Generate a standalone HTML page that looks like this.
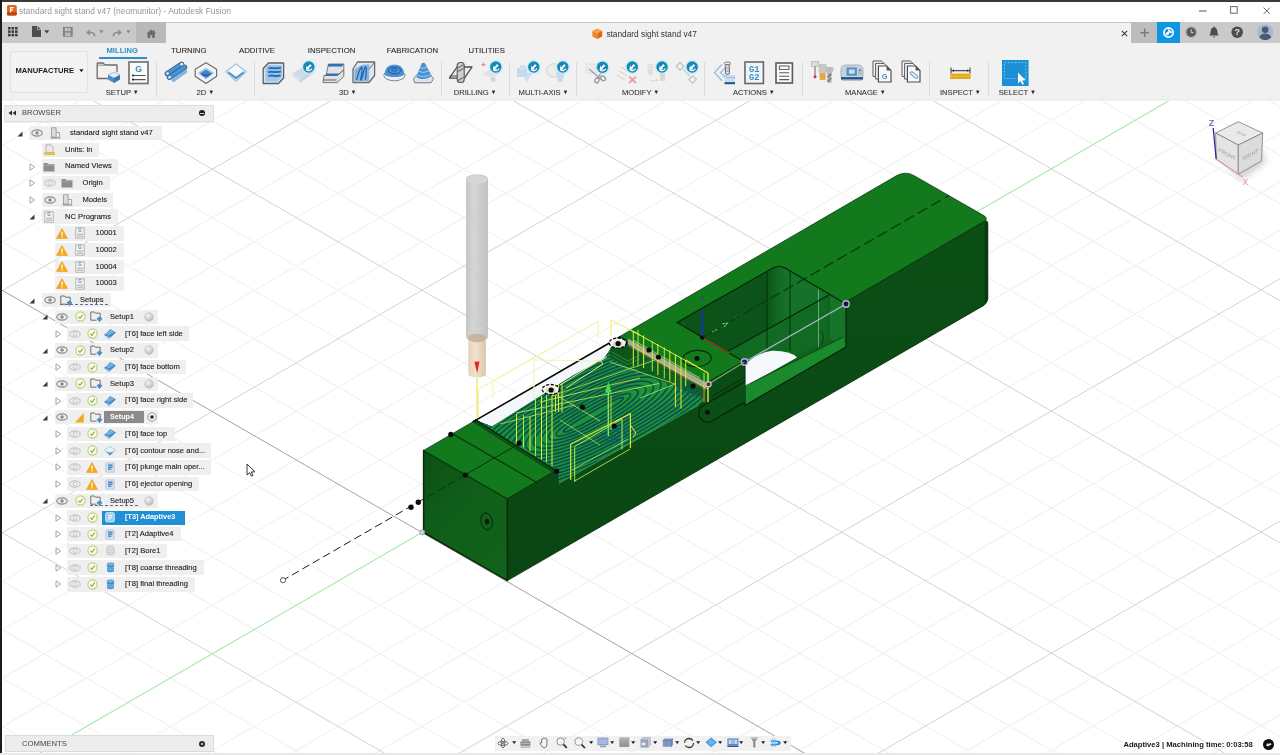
<!DOCTYPE html>
<html><head><meta charset="utf-8"><title>Autodesk Fusion</title>
<style>
*{box-sizing:border-box;margin:0;padding:0}
html,body{width:1280px;height:755px;overflow:hidden;background:#fff;font-family:"Liberation Sans",sans-serif;}
#root{position:relative;width:1280px;height:755px;overflow:hidden;background:#fff}
.abs{position:absolute}
.t{position:absolute;white-space:nowrap;line-height:1;color:#3a3a3a;filter:blur(0.35px)}
.tab{font-size:7.8px;color:#2a2a2a;top:46.5px;-webkit-text-stroke:0.1px #2a2a2a}
.grp{font-size:7.6px;color:#383838;top:88.8px;-webkit-text-stroke:0.1px #383838}
.row{position:absolute;background:#efefef;height:14px;border-radius:1px}
.tr{font-size:7.6px;color:#222;-webkit-text-stroke:0.12px #222}
.ic{filter:blur(0.3px)}
.sep{position:absolute;width:1px;background:#dcdcdc;top:62px;height:34px}
</style></head>
<body><div id="root">
<svg class="abs" style="left:0;top:100px;filter:blur(0.35px)" width="1280" height="655" viewBox="0 100 1280 655">
<path d="M-2892.1 558.7L463.9 -1381.3M-2892.1 510.2L463.9 2446.2M-2850.1 582.9L505.9 -1357.1M-2850.1 486.0L505.9 2422.0M-2808.2 607.1L547.8 -1332.9M-2808.2 461.8L547.8 2397.8M-2766.2 631.3L589.8 -1308.7M-2766.2 437.5L589.8 2373.5M-2682.3 679.7L673.7 -1260.3M-2682.3 389.0L673.7 2325.0M-2640.4 703.9L715.6 -1236.1M-2640.4 364.8L715.6 2300.8M-2598.4 728.1L757.6 -1211.9M-2598.4 340.5L757.6 2276.5M-2556.4 752.3L799.5 -1187.7M-2556.4 316.2L799.5 2252.2M-2472.6 800.7L883.4 -1139.3M-2472.6 267.8L883.4 2203.8M-2430.6 824.9L925.4 -1115.1M-2430.6 243.5L925.4 2179.5M-2388.7 849.1L967.3 -1090.9M-2388.7 219.2L967.3 2155.2M-2346.7 873.3L1009.3 -1066.7M-2346.7 195.0L1009.3 2131.0M-2262.8 921.7L1093.2 -1018.3M-2262.8 146.5L1093.2 2082.5M-2220.8 945.9L1135.2 -994.1M-2220.8 122.2L1135.2 2058.2M-2178.9 970.1L1177.1 -969.9M-2178.9 98.0L1177.1 2034.0M-2136.9 994.3L1219.0 -945.7M-2136.9 73.8L1219.0 2009.8M-2053.1 1042.7L1302.9 -897.3M-2053.1 25.2L1302.9 1961.2M-2011.1 1066.9L1344.9 -873.1M-2011.1 1.0L1344.9 1937.0M-1969.2 1091.1L1386.8 -848.9M-1969.2 -23.2L1386.8 1912.8M-1927.2 1115.3L1428.8 -824.7M-1927.2 -47.5L1428.8 1888.5M-1843.3 1163.7L1512.7 -776.3M-1843.3 -96.0L1512.7 1840.0M-1801.3 1187.9L1554.7 -752.1M-1801.3 -120.2L1554.7 1815.8M-1759.4 1212.1L1596.6 -727.9M-1759.4 -144.5L1596.6 1791.5M-1717.5 1236.3L1638.5 -703.7M-1717.5 -168.8L1638.5 1767.2M-1633.5 1284.7L1722.5 -655.3M-1633.5 -217.2L1722.5 1718.8M-1591.6 1308.9L1764.4 -631.1M-1591.6 -241.5L1764.4 1694.5M-1549.7 1333.1L1806.3 -606.9M-1549.7 -265.8L1806.3 1670.2M-1507.7 1357.3L1848.3 -582.7M-1507.7 -290.0L1848.3 1646.0M-1423.8 1405.7L1932.2 -534.3M-1423.8 -338.5L1932.2 1597.5M-1381.8 1429.9L1974.2 -510.1M-1381.8 -362.8L1974.2 1573.2M-1339.9 1454.1L2016.1 -485.9M-1339.9 -387.0L2016.1 1549.0M-1298.0 1478.3L2058.1 -461.7M-1298.0 -411.2L2058.1 1524.8M-1214.0 1526.7L2141.9 -413.3M-1214.0 -459.8L2141.9 1476.2M-1172.1 1550.9L2183.9 -389.1M-1172.1 -484.0L2183.9 1452.0M-1130.2 1575.1L2225.8 -364.9M-1130.2 -508.2L2225.8 1427.8M-1088.2 1599.3L2267.8 -340.7M-1088.2 -532.5L2267.8 1403.5M-1004.3 1647.7L2351.7 -292.3M-1004.3 -581.0L2351.7 1355.0M-962.3 1671.9L2393.7 -268.1M-962.3 -605.2L2393.7 1330.8M-920.4 1696.1L2435.6 -243.9M-920.4 -629.5L2435.6 1306.5M-878.5 1720.3L2477.6 -219.7M-878.5 -653.8L2477.6 1282.2M-794.5 1768.7L2561.4 -171.3M-794.5 -702.2L2561.4 1233.8M-752.6 1792.9L2603.4 -147.1M-752.6 -726.5L2603.4 1209.5M-710.6 1817.1L2645.3 -122.9M-710.6 -750.8L2645.3 1185.2M-668.7 1841.3L2687.3 -98.7M-668.7 -775.0L2687.3 1161.0M-584.8 1889.7L2771.2 -50.3M-584.8 -823.5L2771.2 1112.5M-542.8 1913.9L2813.2 -26.1M-542.8 -847.8L2813.2 1088.2M-500.9 1938.1L2855.1 -1.9M-500.9 -872.0L2855.1 1064.0M-458.9 1962.3L2897.1 22.3M-458.9 -896.2L2897.1 1039.8M-375.0 2010.7L2980.9 70.7M-375.0 -944.8L2980.9 991.2M-333.1 2034.9L3022.9 94.9M-333.1 -969.0L3022.9 967.0M-291.1 2059.1L3064.8 119.1M-291.2 -993.2L3064.8 942.8M-249.2 2083.3L3106.8 143.3M-249.2 -1017.5L3106.8 918.5M-165.3 2131.7L3190.7 191.7M-165.3 -1066.0L3190.7 870.0M-123.3 2155.9L3232.7 215.9M-123.3 -1090.2L3232.7 845.8M-81.4 2180.1L3274.6 240.1M-81.4 -1114.5L3274.6 821.5M-39.4 2204.3L3316.6 264.3M-39.4 -1138.8L3316.6 797.2M44.5 2252.7L3400.4 312.7M44.5 -1187.2L3400.4 748.8M86.4 2276.9L3442.4 336.9M86.4 -1211.5L3442.4 724.5M128.4 2301.1L3484.4 361.1M128.4 -1235.8L3484.4 700.2M170.3 2325.3L3526.3 385.3M170.3 -1260.0L3526.3 676.0M254.2 2373.7L3610.2 433.7M254.2 -1308.5L3610.2 627.5M296.2 2397.9L3652.2 457.9M296.2 -1332.8L3652.2 603.2M338.1 2422.1L3694.1 482.1M338.1 -1357.0L3694.1 579.0M380.1 2446.3L3736.1 506.3M380.1 -1381.2L3736.1 554.8" stroke="#f2f2f2" stroke-width="1.2" fill="none"/>
<path d="M-2934.0 534.5L422.0 -1405.5M-2934.0 534.5L422.0 2470.5M-2724.2 655.5L631.8 -1284.5M-2724.2 413.2L631.8 2349.2M-2514.5 776.5L841.5 -1163.5M-2514.5 292.0L841.5 2228.0M-2304.8 897.5L1051.2 -1042.5M-2304.8 170.8L1051.2 2106.8M-2095.0 1018.5L1261.0 -921.5M-2095.0 49.5L1261.0 1985.5M-1885.2 1139.5L1470.8 -800.5M-1885.2 -71.8L1470.8 1864.2M-1675.5 1260.5L1680.5 -679.5M-1675.5 -193.0L1680.5 1743.0M-1465.8 1381.5L1890.2 -558.5M-1465.8 -314.2L1890.2 1621.8M-1046.2 1623.5L2309.8 -316.5M-1046.2 -556.8L2309.8 1379.2M-836.5 1744.5L2519.5 -195.5M-836.5 -678.0L2519.5 1258.0M-626.8 1865.5L2729.2 -74.5M-626.8 -799.2L2729.2 1136.8M-417.0 1986.5L2939.0 46.5M-417.0 -920.5L2939.0 1015.5M-207.2 2107.5L3148.8 167.5M-207.2 -1041.8L3148.8 894.2M2.5 2228.5L3358.5 288.5M2.5 -1163.0L3358.5 773.0M212.2 2349.5L3568.2 409.5M212.2 -1284.2L3568.2 651.8M422.0 2470.5L3778.0 530.5M422.0 -1405.5L3778.0 530.5" stroke="#d2d2d2" stroke-width="1" fill="none"/>
<path d="M-1256.0 1502.5L2100.0 -437.5" stroke="#a6e8a6" stroke-width="1.1"/>
<path d="M-1256.0 -435.5L2100.0 1500.5" stroke="#b79a9a" stroke-width="1"/>
<defs><linearGradient id="gside" x1="0" y1="0" x2="0" y2="1"><stop offset="0" stop-color="#0b4f16"/><stop offset="1" stop-color="#0a4613"/></linearGradient><linearGradient id="gfront" x1="0" y1="0" x2="0.8" y2="1"><stop offset="0" stop-color="#0c4f15"/><stop offset="0.45" stop-color="#105e1a"/><stop offset="1" stop-color="#11621b"/></linearGradient></defs>
<path d="M507.4,580.6 L507.4,498.7 L984.2,221.5 Q987.8,219.5 987.8,223.6 L987.8,298.6 Q987.8,302.0 984.2,305.2 Z" fill="url(#gside)" stroke="#062b0b" stroke-width="0.8" stroke-linejoin="round"/>
<path d="M984.8,222.0 L987.8,223.6 L987.8,298.6 L984.8,304.0 Z" fill="#07380e"/>
<polygon points="423.6,532.5 507.4,580.6 507.4,498.7 423.6,450.4" fill="url(#gfront)" stroke="#062b0b" stroke-width="1.5" stroke-linejoin="round"/>
<path d="M423.6,450.4 L507.4,498.7 L984.2,221.5 Q988.2,219.0 984.6,216.0 L914.2,175.7 Q906.2,170.8 897.2,175.3 Z" fill="#127a1c" stroke="#062b0b" stroke-width="0.7" stroke-linejoin="round"/>
<line x1="507.4" y1="498.7" x2="984.2" y2="221.5" stroke="#0a3d10" stroke-width="0.9" />
<defs><linearGradient id="gfil" x1="0" y1="0" x2="1" y2="0"><stop offset="0" stop-color="#0c561a"/><stop offset="0.5" stop-color="#126a22"/><stop offset="1" stop-color="#16752a"/></linearGradient><clipPath id="cpocket"><polygon points="677,322.5 772,268.5 779,265.2 786,268.5 846,304 846,347 745,405.4 744.5,362"/></clipPath></defs>
<g clip-path="url(#cpocket)">
<rect x="670" y="255" width="185" height="160" fill="#10621f"/>
<polygon points="677.0,322.5 767.0,271.2 767.0,329.0 727.6,351.4" fill="#0c531a" stroke="none" stroke-width="0" />
<polygon points="767.0,271.2 772.0,268.5 779.0,265.2 786.0,268.5 790.0,271.0 790.0,316.5 767.0,329.0" fill="url(#gfil)" stroke="none" stroke-width="0" />
<polygon points="790.0,271.0 846.0,304.0 846.0,347.0 829.0,337.5 829.0,295.0 790.0,316.5" fill="#15722a" stroke="none" stroke-width="0" />
<polygon points="829.0,295.0 846.0,304.0 846.0,347.0 829.0,337.5" fill="#167428" stroke="none" stroke-width="0" />
<polygon points="727.6,351.4 829.0,295.0 829.0,337.5 745.0,386.0" fill="#116a21" stroke="none" stroke-width="0" />
<polygon points="677.0,322.5 727.6,351.4 744.5,362.0" fill="#0d581b" stroke="none" stroke-width="0" />
<polygon points="745.0,386.0 843.5,336.9 846.0,347.0 745.0,405.4" fill="#1b8a2d" stroke="none" stroke-width="0" />
<path d="M745,364.5 Q757,352.5 772,350.8 Q790,350.5 797,357.5 L745,386.5 Z" fill="#f6f9fc"/>
<path d="M818.5,331 Q823.5,331.5 823.5,338 Q823,344 818.5,347" fill="none" stroke="#0a3a10" stroke-width="0.9"/>
<line x1="818.5" y1="289.5" x2="818.5" y2="347.0" stroke="#8fc79a" stroke-width="0.7" />
<line x1="767.0" y1="271.2" x2="767.0" y2="349.5" stroke="#062b0b" stroke-width="0.9" />
<line x1="790.0" y1="271.0" x2="790.0" y2="351.0" stroke="#062b0b" stroke-width="0.9" />
<line x1="727.6" y1="351.4" x2="829.0" y2="295.0" stroke="#052508" stroke-width="1.1" />
<line x1="745.0" y1="386.0" x2="843.5" y2="336.9" stroke="#0a3a10" stroke-width="0.8" />
<line x1="829.0" y1="295.0" x2="829.0" y2="337.5" stroke="#0c4515" stroke-width="0.6" />
</g>
<path d="M744.5,362 L677,322.5 L772,268.5 Q779,264.6 786,268.5 L846,304 L846,347 L745,405.4 L745,362" fill="none" stroke="#052508" stroke-width="1.1" stroke-linejoin="round"/>
<line x1="744.5" y1="362.0" x2="846.0" y2="304.0" stroke="#a9b6c6" stroke-width="1.3" />
<circle cx="744.5" cy="362" r="3.2" fill="#1a1446" stroke="#b7b3d6" stroke-width="1.4"/>
<circle cx="846" cy="304" r="3.2" fill="#1a1446" stroke="#b7b3d6" stroke-width="1.4"/>
<line x1="702.3" y1="337.6" x2="729.5" y2="353.0" stroke="#b4321e" stroke-width="1.3" />
<line x1="702.3" y1="337.6" x2="702.3" y2="310.5" stroke="#1830c8" stroke-width="1.8" />
<line x1="702.3" y1="337.6" x2="723.0" y2="325.8" stroke="#7be87b" stroke-width="1.1" stroke-dasharray="3 2"/>
<path d="M728.5,322.6 L722.3,323.6 L724.3,327.2 Z" fill="#7be87b"/>
<circle cx="702.3" cy="337.6" r="2.2" fill="#050505"/>
<text x="699.8" y="300.5" font-size="7" fill="#2a3f9e" font-family="Liberation Sans">Z</text>
<text x="734" y="319.5" font-size="6" fill="#3f9a4a" font-family="Liberation Sans">Y</text>
<text x="682" y="326.5" font-size="6" fill="#2d6a38" font-family="Liberation Sans" transform="rotate(28 684 324)">X</text>
<defs><linearGradient id="gglass" x1="0" y1="0" x2="1" y2="1"><stop offset="0" stop-color="#ffffff"/><stop offset="0.55" stop-color="#f3f6fb"/><stop offset="1" stop-color="#dbe6f3"/></linearGradient><clipPath id="cfloor"><polygon points="492.0,426.5 573.0,375.5 604.0,358.5 611.0,348.0 622.0,338.0 706.0,386.0 706.0,399.0 698.7,405.0 558.5,483.5 556.9,471.4 475.0,419.7"/></clipPath></defs>
<polygon points="473.4,421.6 619.8,337.0 622.0,338.0 611.0,348.0 604.0,358.5 573.0,375.5 492.0,426.5 475.0,419.7" fill="url(#gglass)" stroke="none" stroke-width="0" />
<polygon points="492.0,426.5 573.0,375.5 604.0,358.5 611.0,348.0 622.0,338.0 706.0,386.0 706.0,399.0 698.7,405.0 558.5,483.5 556.9,471.4 475.0,419.7" fill="#1d9238" stroke="none" stroke-width="0" />
<g clip-path="url(#cfloor)" fill="none">
<polyline points="623.1,397.6 623.3,397.7 623.4,397.9 623.4,398.1 623.3,398.4 623.1,398.7 622.8,399.1 622.4,399.6 621.9,400.1 621.3,400.6 620.6,401.2 619.8,401.9 618.9,402.6 617.9,403.3 616.8,404.1 615.6,404.9 614.3,405.8 612.8,406.8 611.3,407.8 609.6,408.8 607.8,409.9 605.8,411.2 603.5,412.5 600.9,414.0 597.1,416.2 593.3,418.4 590.6,419.9 588.3,421.2 586.2,422.4 584.2,423.5 582.4,424.5 580.6,425.4 579.0,426.2 577.4,427.0 575.9,427.7 574.5,428.4 573.1,429.0 571.9,429.6 570.7,430.1 569.6,430.5 568.6,430.9 567.7,431.2 566.8,431.5 566.1,431.7 565.4,431.8 564.9,431.9 564.4,432.0 564.0,432.0 563.7,431.9 563.5,431.8 563.4,431.6 563.4,431.4 563.5,431.1 563.7,430.7 564.0,430.3 564.4,429.9 564.9,429.4 565.5,428.9 566.2,428.3 567.0,427.6 567.9,426.9 568.9,426.2 570.0,425.4 571.2,424.5 572.5,423.7 574.0,422.7 575.5,421.7 577.2,420.7 579.0,419.5 581.0,418.3 583.3,417.0 585.9,415.5 589.7,413.2 593.5,411.0 596.2,409.5 598.5,408.2 600.6,407.1 602.6,406.0 604.4,405.0 606.2,404.1 607.8,403.2 609.4,402.5 610.9,401.7 612.3,401.1 613.7,400.5 614.9,399.9 616.1,399.4 617.2,399.0 618.2,398.6 619.1,398.3 619.9,398.0 620.7,397.8 621.4,397.6 621.9,397.5 622.4,397.5 622.8,397.5 623.1,397.6" fill="none" stroke="#0b4653" stroke-width="1.6" opacity="0.95"/>
<polyline points="629.7,393.8 630.1,394.0 630.4,394.3 630.6,394.6 630.7,395.1 630.6,395.6 630.4,396.1 630.1,396.7 629.7,397.4 629.1,398.1 628.4,398.9 627.6,399.8 626.6,400.7 625.5,401.6 624.3,402.6 622.9,403.7 621.4,404.8 619.7,406.0 617.9,407.3 615.9,408.6 613.7,410.0 611.3,411.5 608.6,413.1 605.5,415.0 600.8,417.7 596.1,420.4 592.9,422.2 590.0,423.8 587.4,425.2 584.9,426.5 582.6,427.7 580.4,428.8 578.3,429.8 576.2,430.7 574.3,431.6 572.4,432.3 570.7,433.0 569.0,433.6 567.4,434.2 565.9,434.7 564.5,435.1 563.2,435.4 562.0,435.6 561.0,435.8 560.0,435.9 559.1,436.0 558.3,436.0 557.7,435.9 557.1,435.7 556.7,435.5 556.4,435.2 556.2,434.8 556.1,434.4 556.2,433.9 556.4,433.4 556.7,432.8 557.1,432.1 557.7,431.3 558.4,430.6 559.2,429.7 560.2,428.8 561.3,427.8 562.5,426.8 563.9,425.8 565.4,424.6 567.1,423.4 568.9,422.2 570.9,420.9 573.1,419.5 575.5,418.0 578.2,416.3 581.3,414.5 586.0,411.8 590.7,409.1 593.9,407.2 596.8,405.7 599.4,404.3 601.9,403.0 604.2,401.8 606.4,400.7 608.5,399.7 610.6,398.8 612.5,397.9 614.4,397.2 616.1,396.5 617.8,395.8 619.4,395.3 620.9,394.8 622.3,394.4 623.6,394.1 624.8,393.8 625.8,393.6 626.8,393.5 627.7,393.5 628.5,393.5 629.1,393.6 629.7,393.8" fill="none" stroke="#0c4e4c" stroke-width="1.6" opacity="0.95"/>
<polyline points="636.3,389.9 637.0,390.3 637.5,390.7 637.8,391.2 638.1,391.7 638.2,392.4 638.1,393.1 637.9,393.9 637.5,394.7 636.9,395.6 636.2,396.6 635.4,397.7 634.3,398.8 633.2,399.9 631.8,401.2 630.3,402.5 628.5,403.9 626.7,405.3 624.6,406.8 622.3,408.4 619.7,410.1 616.9,411.8 613.8,413.8 610.1,416.0 604.5,419.2 599.0,422.4 595.1,424.5 591.7,426.4 588.6,428.0 585.6,429.5 582.8,430.9 580.1,432.2 577.5,433.3 575.1,434.4 572.7,435.4 570.4,436.2 568.2,437.0 566.1,437.7 564.1,438.3 562.2,438.8 560.5,439.2 558.8,439.6 557.2,439.8 555.8,440.0 554.5,440.1 553.3,440.0 552.2,440.0 551.3,439.8 550.5,439.5 549.8,439.2 549.3,438.8 549.0,438.3 548.7,437.7 548.6,437.1 548.7,436.4 548.9,435.6 549.3,434.8 549.9,433.8 550.6,432.9 551.4,431.8 552.4,430.7 553.6,429.5 555.0,428.3 556.5,427.0 558.2,425.6 560.1,424.2 562.2,422.7 564.5,421.1 567.1,419.4 569.9,417.6 573.0,415.7 576.7,413.5 582.3,410.3 587.8,407.1 591.7,404.9 595.1,403.1 598.2,401.4 601.2,399.9 604.0,398.5 606.7,397.3 609.3,396.1 611.7,395.1 614.1,394.1 616.4,393.2 618.6,392.5 620.7,391.8 622.7,391.2 624.6,390.7 626.3,390.2 628.0,389.9 629.6,389.7 631.0,389.5 632.3,389.4 633.5,389.4 634.6,389.5 635.5,389.7 636.3,389.9" fill="none" stroke="#0b4653" stroke-width="1.6" opacity="0.95"/>
<polyline points="642.9,386.1 643.8,386.6 644.5,387.1 645.1,387.7 645.5,388.4 645.7,389.2 645.7,390.0 645.6,391.0 645.3,392.0 644.8,393.1 644.0,394.3 643.2,395.6 642.1,396.9 640.8,398.3 639.3,399.7 637.6,401.3 635.7,402.9 633.6,404.6 631.2,406.3 628.6,408.2 625.7,410.1 622.5,412.2 618.9,414.4 614.6,417.0 608.2,420.7 601.8,424.4 597.4,426.9 593.4,429.0 589.8,430.9 586.3,432.6 583.0,434.2 579.9,435.6 576.8,436.9 573.9,438.1 571.1,439.2 568.3,440.1 565.7,441.0 563.2,441.8 560.8,442.4 558.5,443.0 556.4,443.4 554.3,443.7 552.4,444.0 550.7,444.1 549.0,444.2 547.5,444.1 546.2,443.9 544.9,443.7 543.9,443.4 543.0,442.9 542.3,442.4 541.7,441.8 541.3,441.1 541.1,440.3 541.1,439.4 541.2,438.5 541.5,437.5 542.0,436.3 542.7,435.2 543.6,433.9 544.7,432.6 546.0,431.2 547.5,429.7 549.2,428.2 551.1,426.6 553.2,424.9 555.6,423.2 558.2,421.3 561.1,419.4 564.3,417.3 567.9,415.1 572.2,412.5 578.5,408.8 585.0,405.1 589.4,402.6 593.4,400.5 597.0,398.6 600.5,396.9 603.8,395.3 606.9,393.9 610.0,392.6 612.9,391.4 615.7,390.3 618.5,389.3 621.1,388.5 623.6,387.7 626.0,387.1 628.2,386.5 630.4,386.1 632.5,385.7 634.4,385.5 636.1,385.4 637.8,385.3 639.3,385.4 640.6,385.5 641.8,385.8 642.9,386.1" fill="none" stroke="#0c4e4c" stroke-width="1.6" opacity="0.95"/>
<polyline points="649.5,382.3 650.6,382.8 651.6,383.5 652.3,384.2 652.9,385.1 653.2,386.0 653.4,387.0 653.3,388.1 653.0,389.3 652.6,390.6 651.9,392.0 650.9,393.5 649.8,395.0 648.4,396.6 646.8,398.3 644.9,400.1 642.8,401.9 640.5,403.8 637.8,405.8 634.9,407.9 631.7,410.2 628.1,412.5 624.0,415.1 619.2,418.0 612.0,422.2 604.7,426.4 599.6,429.2 595.1,431.6 591.0,433.7 587.0,435.6 583.2,437.4 579.6,439.0 576.1,440.5 572.7,441.8 569.5,443.0 566.3,444.1 563.3,445.0 560.3,445.8 557.5,446.5 554.9,447.1 552.3,447.6 549.9,447.9 547.6,448.1 545.5,448.3 543.5,448.3 541.7,448.2 540.1,447.9 538.6,447.6 537.3,447.2 536.2,446.6 535.2,446.0 534.5,445.3 533.9,444.4 533.6,443.5 533.4,442.5 533.5,441.3 533.7,440.1 534.2,438.8 534.9,437.5 535.9,436.0 537.0,434.5 538.4,432.9 540.0,431.2 541.9,429.4 544.0,427.6 546.3,425.7 548.9,423.6 551.9,421.5 555.1,419.3 558.7,417.0 562.8,414.4 567.6,411.5 574.8,407.3 582.1,403.1 587.2,400.3 591.7,397.9 595.8,395.8 599.8,393.8 603.5,392.1 607.2,390.5 610.7,389.0 614.1,387.7 617.3,386.5 620.5,385.4 623.5,384.5 626.5,383.6 629.3,382.9 631.9,382.4 634.5,381.9 636.9,381.6 639.2,381.3 641.3,381.2 643.3,381.2 645.1,381.3 646.7,381.5 648.2,381.9 649.5,382.3" fill="none" stroke="#0b4653" stroke-width="1.6" opacity="0.95"/>
<polyline points="656.1,378.5 657.5,379.1 658.6,379.9 659.6,380.7 660.3,381.7 660.8,382.8 661.0,384.0 661.0,385.3 660.8,386.7 660.4,388.1 659.7,389.7 658.7,391.4 657.5,393.1 656.0,394.9 654.3,396.8 652.3,398.8 650.0,400.9 647.4,403.1 644.5,405.3 641.3,407.7 637.7,410.2 633.7,412.8 629.1,415.7 623.7,419.0 615.7,423.7 607.5,428.3 601.9,431.5 596.8,434.1 592.2,436.5 587.7,438.7 583.5,440.6 579.4,442.4 575.4,444.0 571.6,445.5 567.8,446.8 564.3,448.0 560.8,449.0 557.4,449.9 554.2,450.6 551.2,451.3 548.2,451.7 545.5,452.1 542.8,452.3 540.4,452.4 538.1,452.4 535.9,452.2 534.0,451.9 532.2,451.5 530.7,451.0 529.3,450.3 528.2,449.6 527.2,448.7 526.5,447.8 526.0,446.7 525.8,445.5 525.7,444.2 526.0,442.8 526.4,441.3 527.1,439.8 528.1,438.1 529.3,436.4 530.8,434.6 532.5,432.6 534.5,430.6 536.8,428.6 539.4,426.4 542.3,424.1 545.5,421.8 549.1,419.3 553.1,416.6 557.7,413.8 563.1,410.5 571.1,405.8 579.3,401.1 584.9,398.0 590.0,395.3 594.6,393.0 599.1,390.8 603.3,388.9 607.4,387.1 611.4,385.5 615.2,384.0 618.9,382.7 622.5,381.5 626.0,380.5 629.3,379.6 632.6,378.8 635.6,378.2 638.6,377.7 641.3,377.4 644.0,377.2 646.4,377.1 648.7,377.1 650.9,377.3 652.8,377.6 654.6,378.0 656.1,378.5" fill="none" stroke="#0c4e4c" stroke-width="1.6" opacity="0.95"/>
<polyline points="662.7,374.7 664.3,375.4 665.7,376.3 666.8,377.3 667.7,378.4 668.3,379.6 668.7,381.0 668.8,382.4 668.6,384.0 668.2,385.6 667.5,387.4 666.5,389.2 665.2,391.2 663.7,393.2 661.8,395.4 659.6,397.6 657.1,399.9 654.3,402.3 651.1,404.9 647.6,407.5 643.7,410.3 639.2,413.2 634.2,416.4 628.3,419.9 619.4,425.2 610.4,430.3 604.1,433.8 598.5,436.7 593.3,439.3 588.4,441.7 583.7,443.9 579.1,445.8 574.7,447.6 570.4,449.2 566.2,450.6 562.2,451.9 558.3,453.0 554.6,454.0 550.9,454.8 547.5,455.4 544.2,455.9 541.0,456.3 538.0,456.5 535.2,456.6 532.6,456.5 530.1,456.3 527.9,455.9 525.9,455.4 524.1,454.8 522.5,454.1 521.1,453.2 520.0,452.2 519.1,451.1 518.5,449.9 518.1,448.5 518.0,447.1 518.2,445.5 518.6,443.8 519.3,442.1 520.3,440.2 521.6,438.3 523.1,436.2 525.0,434.1 527.2,431.9 529.7,429.5 532.5,427.1 535.7,424.6 539.2,422.0 543.1,419.2 547.6,416.3 552.6,413.1 558.5,409.5 567.4,404.3 576.4,399.2 582.7,395.7 588.3,392.8 593.4,390.1 598.4,387.8 603.1,385.6 607.7,383.7 612.1,381.9 616.4,380.3 620.6,378.9 624.6,377.6 628.5,376.5 632.2,375.5 635.9,374.7 639.3,374.1 642.6,373.6 645.8,373.2 648.8,373.0 651.6,372.9 654.2,373.0 656.6,373.2 658.9,373.6 660.9,374.0 662.7,374.7" fill="none" stroke="#0b4653" stroke-width="1.6" opacity="0.95"/>
<polyline points="669.3,370.8 671.1,371.7 672.7,372.7 674.0,373.8 675.1,375.1 675.8,376.4 676.3,377.9 676.5,379.5 676.4,381.3 676.0,383.1 675.3,385.1 674.3,387.1 672.9,389.3 671.3,391.6 669.3,393.9 667.0,396.4 664.3,398.9 661.2,401.6 657.8,404.4 653.9,407.3 649.6,410.3 644.8,413.5 639.3,417.0 632.9,420.9 623.1,426.6 613.2,432.3 606.4,436.1 600.2,439.3 594.5,442.2 589.1,444.7 583.9,447.1 578.9,449.2 574.0,451.1 569.2,452.9 564.6,454.4 560.2,455.8 555.8,457.0 551.7,458.0 547.7,458.9 543.8,459.6 540.1,460.1 536.6,460.5 533.2,460.7 530.1,460.7 527.1,460.6 524.4,460.3 521.8,459.9 519.5,459.3 517.5,458.6 515.6,457.8 514.1,456.8 512.8,455.7 511.7,454.4 511.0,453.0 510.5,451.5 510.3,449.9 510.4,448.2 510.8,446.3 511.5,444.4 512.5,442.3 513.8,440.2 515.5,437.9 517.5,435.5 519.8,433.1 522.5,430.5 525.6,427.9 529.0,425.1 532.9,422.2 537.2,419.2 542.0,415.9 547.5,412.5 553.9,408.5 563.7,402.8 573.6,397.2 580.4,393.4 586.6,390.2 592.3,387.3 597.7,384.7 602.9,382.4 607.9,380.3 612.8,378.3 617.6,376.6 622.2,375.0 626.6,373.7 630.9,372.5 635.1,371.5 639.1,370.6 643.0,369.9 646.7,369.4 650.2,369.0 653.6,368.8 656.7,368.8 659.7,368.9 662.4,369.2 665.0,369.6 667.3,370.1 669.3,370.8" fill="none" stroke="#0c4e4c" stroke-width="1.6" opacity="0.95"/>
<polyline points="675.9,367.0 678.0,368.0 679.8,369.1 681.3,370.3 682.5,371.7 683.4,373.2 684.0,374.9 684.2,376.7 684.2,378.6 683.8,380.6 683.1,382.8 682.1,385.0 680.7,387.4 678.9,389.9 676.8,392.5 674.3,395.2 671.4,398.0 668.1,400.9 664.4,403.9 660.3,407.0 655.6,410.4 650.4,413.9 644.4,417.7 637.4,421.9 626.8,428.1 616.1,434.3 608.6,438.4 601.9,441.9 595.7,445.0 589.8,447.8 584.1,450.3 578.6,452.6 573.3,454.7 568.1,456.6 563.0,458.2 558.1,459.7 553.4,461.0 548.8,462.1 544.4,463.0 540.1,463.7 536.0,464.3 532.1,464.6 528.4,464.8 524.9,464.8 521.6,464.7 518.6,464.4 515.8,463.9 513.2,463.2 510.9,462.4 508.8,461.5 507.0,460.4 505.5,459.1 504.3,457.8 503.4,456.2 502.8,454.6 502.6,452.8 502.6,450.9 503.0,448.8 503.7,446.7 504.7,444.4 506.1,442.1 507.9,439.6 510.0,437.0 512.5,434.3 515.4,431.5 518.7,428.6 522.4,425.6 526.5,422.4 531.2,419.1 536.4,415.6 542.3,411.8 549.4,407.5 560.0,401.3 570.7,395.2 578.2,391.1 584.9,387.6 591.1,384.5 597.0,381.7 602.7,379.2 608.2,376.9 613.5,374.8 618.7,372.9 623.8,371.2 628.7,369.8 633.4,368.5 638.0,367.4 642.4,366.5 646.7,365.8 650.8,365.2 654.7,364.8 658.4,364.7 661.9,364.6 665.2,364.8 668.2,365.1 671.0,365.6 673.6,366.2 675.9,367.0" fill="none" stroke="#0b4653" stroke-width="1.6" opacity="0.95"/>
<polyline points="682.5,363.2 684.8,364.3 686.8,365.5 688.5,366.9 689.9,368.4 690.9,370.1 691.6,371.9 692.0,373.8 692.0,375.9 691.6,378.1 690.9,380.5 689.9,382.9 688.4,385.5 686.5,388.2 684.3,391.0 681.6,393.9 678.6,397.0 675.0,400.1 671.1,403.4 666.6,406.8 661.6,410.4 656.0,414.2 649.6,418.3 642.0,422.9 630.5,429.6 618.9,436.2 610.8,440.7 603.6,444.5 596.9,447.8 590.5,450.8 584.3,453.6 578.3,456.0 572.5,458.3 566.9,460.3 561.4,462.1 556.1,463.6 550.9,465.0 545.9,466.2 541.1,467.1 536.4,467.9 531.9,468.4 527.7,468.8 523.6,469.0 519.8,469.0 516.2,468.8 512.8,468.4 509.7,467.9 506.8,467.2 504.3,466.3 502.0,465.2 500.0,464.0 498.3,462.6 496.9,461.1 495.9,459.4 495.2,457.6 494.8,455.6 494.8,453.6 495.2,451.3 495.9,449.0 496.9,446.5 498.4,444.0 500.3,441.3 502.5,438.4 505.2,435.5 508.2,432.5 511.8,429.3 515.7,426.1 520.2,422.6 525.2,419.1 530.8,415.3 537.2,411.2 544.8,406.6 556.3,399.9 567.9,393.2 575.9,388.8 583.2,385.0 589.9,381.7 596.3,378.7 602.5,375.9 608.4,373.4 614.3,371.2 619.9,369.2 625.4,367.4 630.7,365.8 635.9,364.5 640.9,363.3 645.7,362.4 650.4,361.6 654.9,361.0 659.1,360.7 663.2,360.5 667.0,360.5 670.6,360.7 674.0,361.0 677.1,361.6 680.0,362.3 682.5,363.2" fill="none" stroke="#0c4e4c" stroke-width="1.6" opacity="0.95"/>
<polyline points="689.1,359.4 691.7,360.5 693.9,361.9 695.7,363.4 697.3,365.0 698.4,366.9 699.3,368.8 699.7,371.0 699.8,373.2 699.5,375.6 698.7,378.2 697.6,380.8 696.1,383.6 694.2,386.5 691.8,389.6 689.0,392.7 685.7,396.0 682.0,399.4 677.7,402.9 672.9,406.6 667.6,410.5 661.6,414.5 654.7,418.9 646.5,423.9 634.2,431.1 621.8,438.2 613.1,443.0 605.3,447.0 598.1,450.6 591.2,453.9 584.5,456.8 578.1,459.4 571.8,461.8 565.7,464.0 559.8,465.9 554.0,467.5 548.4,469.0 543.0,470.2 537.8,471.2 532.7,472.0 527.9,472.6 523.2,473.0 518.8,473.2 514.6,473.1 510.7,472.9 507.0,472.5 503.6,471.9 500.5,471.1 497.6,470.1 495.1,468.9 492.9,467.6 491.1,466.1 489.5,464.4 488.4,462.6 487.5,460.6 487.1,458.5 487.0,456.2 487.3,453.8 488.0,451.3 489.2,448.6 490.7,445.8 492.6,442.9 495.0,439.9 497.8,436.8 501.1,433.5 504.8,430.1 509.1,426.6 513.9,422.9 519.2,419.0 525.2,414.9 532.1,410.5 540.3,405.6 552.6,398.4 565.0,391.3 573.7,386.5 581.5,382.4 588.7,378.8 595.6,375.6 602.3,372.7 608.7,370.0 615.0,367.7 621.1,365.5 627.0,363.6 632.8,361.9 638.4,360.5 643.8,359.3 649.0,358.2 654.1,357.5 658.9,356.9 663.6,356.5 668.0,356.3 672.2,356.3 676.1,356.6 679.8,357.0 683.2,357.6 686.3,358.4 689.1,359.4" fill="none" stroke="#0b4653" stroke-width="1.6" opacity="0.95"/>
<polyline points="695.8,355.6 698.5,356.8 700.9,358.3 703.0,359.9 704.7,361.7 706.0,363.7 706.9,365.8 707.4,368.1 707.6,370.5 707.3,373.1 706.6,375.9 705.4,378.7 703.8,381.7 701.8,384.9 699.3,388.1 696.3,391.5 692.8,395.0 688.9,398.7 684.4,402.4 679.3,406.4 673.6,410.5 667.1,414.9 659.8,419.6 651.1,424.9 637.9,432.6 624.6,440.2 615.3,445.3 607.0,449.6 599.3,453.5 591.9,456.9 584.8,460.0 577.8,462.8 571.1,465.4 564.6,467.7 558.2,469.7 552.0,471.5 546.0,473.0 540.1,474.3 534.5,475.3 529.0,476.2 523.8,476.8 518.8,477.2 514.0,477.3 509.5,477.3 505.2,477.0 501.2,476.5 497.5,475.9 494.1,475.0 491.0,473.9 488.3,472.6 485.9,471.2 483.8,469.6 482.1,467.8 480.8,465.8 479.9,463.7 479.4,461.4 479.2,458.9 479.5,456.3 480.2,453.6 481.4,450.7 483.0,447.7 485.0,444.6 487.5,441.4 490.5,438.0 494.0,434.5 497.9,430.8 502.4,427.0 507.5,423.1 513.2,419.0 519.7,414.6 527.0,409.9 535.7,404.6 548.8,396.9 562.2,389.3 571.5,384.2 579.7,379.9 587.5,376.0 594.9,372.6 602.0,369.5 609.0,366.6 615.7,364.1 622.2,361.8 628.6,359.8 634.8,358.0 640.8,356.5 646.7,355.2 652.3,354.1 657.8,353.3 663.0,352.7 668.0,352.3 672.8,352.1 677.3,352.2 681.6,352.5 685.6,352.9 689.3,353.6 692.7,354.5 695.8,355.6" fill="none" stroke="#0c4e4c" stroke-width="1.6" opacity="0.95"/>
<polyline points="702.4,351.7 705.3,353.1 708.0,354.7 710.2,356.4 712.1,358.4 713.5,360.5 714.6,362.8 715.2,365.2 715.4,367.9 715.1,370.6 714.4,373.6 713.2,376.6 711.5,379.8 709.4,383.2 706.8,386.7 703.6,390.3 700.0,394.0 695.8,397.9 691.0,402.0 685.6,406.2 679.6,410.6 672.7,415.2 664.9,420.2 655.7,425.9 641.7,434.1 627.5,442.2 617.6,447.6 608.7,452.2 600.5,456.3 592.6,459.9 585.0,463.3 577.6,466.2 570.4,468.9 563.4,471.4 556.6,473.5 550.0,475.4 543.5,477.0 537.2,478.3 531.2,479.5 525.3,480.3 519.7,481.0 514.3,481.3 509.2,481.5 504.3,481.4 499.7,481.1 495.4,480.6 491.4,479.8 487.8,478.9 484.4,477.7 481.5,476.4 478.8,474.8 476.6,473.0 474.7,471.1 473.3,469.0 472.2,466.7 471.6,464.2 471.4,461.6 471.7,458.8 472.4,455.9 473.6,452.8 475.2,449.6 477.4,446.3 480.0,442.8 483.1,439.2 486.8,435.4 491.0,431.6 495.8,427.5 501.2,423.3 507.2,418.9 514.1,414.3 521.9,409.2 531.1,403.6 545.1,395.4 559.3,387.3 569.2,381.9 578.0,377.3 586.3,373.2 594.2,369.5 601.8,366.2 609.2,363.2 616.4,360.5 623.4,358.1 630.2,356.0 636.8,354.1 643.3,352.5 649.6,351.1 655.6,350.0 661.5,349.1 667.1,348.5 672.5,348.1 677.6,348.0 682.5,348.1 687.1,348.4 691.4,348.9 695.4,349.6 699.0,350.6 702.4,351.7" fill="none" stroke="#0b4653" stroke-width="1.6" opacity="0.95"/>
<polyline points="709.0,347.9 712.2,349.4 715.0,351.1 717.4,353.0 719.5,355.0 721.0,357.3 722.2,359.8 722.9,362.4 723.1,365.2 722.9,368.1 722.2,371.3 721.0,374.5 719.3,377.9 717.0,381.5 714.3,385.2 711.0,389.1 707.1,393.0 702.7,397.2 697.6,401.5 692.0,405.9 685.5,410.6 678.3,415.6 670.0,420.9 660.2,426.9 645.4,435.6 630.3,444.2 619.8,449.9 610.4,454.8 601.7,459.1 593.3,463.0 585.2,466.5 577.3,469.7 569.7,472.5 562.2,475.0 555.0,477.3 547.9,479.3 541.0,481.0 534.4,482.4 527.9,483.6 521.6,484.5 515.6,485.1 509.9,485.5 504.4,485.7 499.2,485.6 494.2,485.2 489.6,484.6 485.4,483.8 481.4,482.8 477.8,481.5 474.6,480.1 471.8,478.4 469.4,476.5 467.3,474.4 465.7,472.2 464.6,469.7 463.9,467.1 463.7,464.3 463.9,461.3 464.6,458.2 465.8,454.9 467.5,451.5 469.8,448.0 472.5,444.3 475.8,440.4 479.7,436.4 484.1,432.3 489.1,428.0 494.8,423.5 501.3,418.9 508.5,413.9 516.8,408.6 526.6,402.6 541.4,393.9 556.5,385.3 567.0,379.6 576.3,374.7 585.1,370.4 593.5,366.5 601.6,363.0 609.5,359.8 617.1,357.0 624.6,354.4 631.8,352.2 638.9,350.2 645.8,348.5 652.4,347.1 658.9,345.9 665.2,345.0 671.2,344.3 676.9,344.0 682.4,343.8 687.6,343.9 692.6,344.3 697.2,344.8 701.4,345.6 705.4,346.7 709.0,347.9" fill="none" stroke="#0c4e4c" stroke-width="1.6" opacity="0.95"/>
<polyline points="715.6,344.1 719.0,345.7 722.1,347.5 724.7,349.5 726.9,351.7 728.6,354.1 729.8,356.7 730.6,359.5 730.9,362.5 730.7,365.6 730.0,369.0 728.8,372.4 727.0,376.1 724.7,379.8 721.8,383.8 718.3,387.8 714.3,392.1 709.6,396.4 704.3,401.0 698.3,405.7 691.5,410.7 683.9,415.9 675.1,421.5 664.8,427.9 649.1,437.1 633.2,446.1 622.1,452.2 612.2,457.4 602.9,461.9 594.0,466.0 585.4,469.7 577.1,473.1 569.0,476.1 561.1,478.7 553.4,481.1 545.9,483.2 538.6,485.0 531.5,486.5 524.6,487.7 518.0,488.6 511.6,489.3 505.4,489.7 499.6,489.8 494.0,489.7 488.8,489.3 483.8,488.7 479.3,487.8 475.1,486.7 471.2,485.4 467.8,483.8 464.7,482.0 462.1,480.0 459.9,477.8 458.2,475.4 457.0,472.8 456.2,470.0 455.9,467.0 456.1,463.8 456.8,460.5 458.0,457.1 459.8,453.4 462.1,449.6 465.0,445.7 468.5,441.6 472.5,437.4 477.2,433.0 482.5,428.5 488.5,423.8 495.3,418.8 502.9,413.6 511.7,408.0 522.0,401.6 537.7,392.4 553.6,383.3 564.7,377.3 574.6,372.1 583.9,367.6 592.8,363.5 601.4,359.8 609.7,356.4 617.8,353.4 625.7,350.7 633.4,348.4 640.9,346.3 648.2,344.5 655.3,343.0 662.2,341.8 668.8,340.8 675.2,340.2 681.4,339.8 687.2,339.6 692.8,339.8 698.0,340.1 702.9,340.8 707.5,341.7 711.7,342.8 715.6,344.1" fill="none" stroke="#0b4653" stroke-width="1.6" opacity="0.95"/>
<polyline points="722.2,340.3 725.9,342.0 729.1,343.9 731.9,346.0 734.3,348.4 736.1,350.9 737.5,353.7 738.4,356.7 738.7,359.8 738.5,363.1 737.8,366.6 736.5,370.3 734.7,374.2 732.3,378.2 729.3,382.3 725.7,386.6 721.4,391.1 716.5,395.7 710.9,400.5 704.6,405.5 697.5,410.7 689.5,416.2 680.3,422.2 669.3,428.9 652.8,438.5 636.0,448.1 624.3,454.5 613.9,459.9 604.0,464.7 594.7,469.1 585.6,473.0 576.8,476.5 568.3,479.6 559.9,482.4 551.8,484.9 543.8,487.1 536.1,489.0 528.6,490.5 521.3,491.8 514.3,492.8 507.5,493.5 501.0,493.9 494.8,494.0 488.9,493.9 483.3,493.4 478.1,492.8 473.2,491.8 468.7,490.6 464.6,489.2 460.9,487.5 457.7,485.6 454.9,483.5 452.5,481.1 450.7,478.6 449.3,475.8 448.4,472.8 448.1,469.7 448.3,466.3 449.0,462.8 450.2,459.2 452.1,455.3 454.5,451.3 457.5,447.2 461.1,442.9 465.4,438.4 470.3,433.8 475.9,429.0 482.2,424.0 489.3,418.8 497.3,413.2 506.5,407.3 517.5,400.6 534.0,390.9 550.8,381.4 562.5,375.0 572.9,369.5 582.8,364.7 592.1,360.4 601.2,356.5 610.0,353.0 618.5,349.9 626.9,347.0 635.0,344.5 643.0,342.4 650.7,340.5 658.2,338.9 665.5,337.7 672.5,336.7 679.3,336.0 685.8,335.6 692.0,335.5 697.9,335.6 703.5,336.0 708.7,336.7 713.6,337.7 718.1,338.9 722.2,340.3" fill="none" stroke="#0c4e4c" stroke-width="1.6" opacity="0.95"/>
<polyline points="728.8,336.5 732.7,338.3 736.2,340.3 739.1,342.5 741.7,345.0 743.7,347.7 745.1,350.7 746.1,353.8 746.5,357.1 746.4,360.6 745.6,364.3 744.3,368.2 742.4,372.3 739.9,376.5 736.8,380.9 733.0,385.4 728.6,390.1 723.4,395.0 717.6,400.0 711.0,405.3 703.5,410.8 695.0,416.6 685.4,422.8 673.9,429.9 656.5,440.0 638.9,450.1 626.6,456.8 615.6,462.5 605.2,467.6 595.4,472.1 585.8,476.2 576.6,479.9 567.6,483.2 558.7,486.1 550.2,488.7 541.8,491.0 533.6,493.0 525.7,494.6 518.0,495.9 510.6,496.9 503.4,497.6 496.5,498.1 490.0,498.2 483.7,498.0 477.8,497.5 472.3,496.8 467.1,495.8 462.3,494.5 458.0,493.0 454.1,491.2 450.6,489.2 447.6,486.9 445.1,484.5 443.1,481.7 441.7,478.8 440.7,475.7 440.3,472.4 440.4,468.8 441.2,465.1 442.5,461.3 444.4,457.2 446.9,453.0 450.0,448.6 453.8,444.1 458.2,439.4 463.4,434.5 469.2,429.5 475.8,424.2 483.3,418.7 491.8,412.9 501.4,406.7 512.9,399.6 530.3,389.4 547.9,379.4 560.2,372.7 571.2,367.0 581.6,361.9 591.4,357.4 601.0,353.3 610.2,349.6 619.2,346.3 628.0,343.3 636.6,340.7 645.0,338.5 653.2,336.5 661.1,334.9 668.8,333.5 676.2,332.5 683.4,331.8 690.3,331.4 696.8,331.3 703.1,331.5 709.0,331.9 714.5,332.7 719.7,333.7 724.4,334.9 728.8,336.5" fill="none" stroke="#0b4653" stroke-width="1.6" opacity="0.95"/>
<polyline points="735.4,332.7 739.5,334.5 743.2,336.7 746.4,339.1 749.0,341.7 751.2,344.5 752.8,347.6 753.8,350.9 754.3,354.4 754.2,358.1 753.4,362.0 752.1,366.1 750.1,370.4 747.5,374.8 744.3,379.4 740.3,384.2 735.7,389.1 730.3,394.2 724.2,399.5 717.3,405.1 709.5,410.8 700.6,416.9 690.5,423.5 678.4,430.8 660.2,441.5 641.7,452.1 628.8,459.1 617.3,465.1 606.4,470.4 596.1,475.1 586.0,479.4 576.3,483.3 566.8,486.7 557.6,489.8 548.5,492.6 539.7,494.9 531.2,497.0 522.8,498.7 514.7,500.0 506.9,501.1 499.3,501.8 492.1,502.2 485.2,502.3 478.6,502.1 472.3,501.6 466.5,500.9 461.0,499.8 456.0,498.4 451.4,496.8 447.3,494.9 443.6,492.8 440.4,490.4 437.7,487.8 435.6,484.9 434.0,481.8 433.0,478.5 432.5,475.0 432.6,471.3 433.3,467.4 434.7,463.4 436.6,459.1 439.3,454.7 442.5,450.1 446.5,445.3 451.1,440.4 456.4,435.2 462.6,429.9 469.5,424.4 477.3,418.7 486.2,412.6 496.3,406.0 508.3,398.6 526.6,388.0 545.1,377.4 558.0,370.4 569.5,364.4 580.4,359.1 590.7,354.3 600.7,350.1 610.5,346.2 620.0,342.7 629.2,339.6 638.2,336.9 647.1,334.5 655.6,332.5 664.0,330.8 672.1,329.4 679.9,328.4 687.5,327.7 694.7,327.2 701.6,327.1 708.2,327.3 714.5,327.8 720.3,328.6 725.8,329.7 730.8,331.0 735.4,332.7" fill="none" stroke="#0c4e4c" stroke-width="1.6" opacity="0.95"/>
<polyline points="742.0,328.8 746.4,330.8 750.3,333.1 753.6,335.6 756.4,338.4 758.7,341.4 760.4,344.6 761.6,348.1 762.1,351.7 762.0,355.6 761.3,359.7 759.9,364.0 757.9,368.5 755.2,373.1 751.8,378.0 747.7,383.0 742.8,388.1 737.3,393.5 730.9,399.1 723.6,404.8 715.5,410.9 706.2,417.2 695.6,424.1 683.0,431.8 663.9,443.0 644.6,454.1 631.1,461.4 619.0,467.7 607.6,473.2 596.8,478.2 586.3,482.6 576.1,486.7 566.1,490.3 556.4,493.5 546.9,496.4 537.7,498.8 528.7,501.0 519.9,502.7 511.4,504.2 503.2,505.2 495.3,506.0 487.6,506.4 480.4,506.5 473.4,506.3 466.9,505.8 460.7,504.9 455.0,503.8 449.6,502.4 444.8,500.6 440.4,498.7 436.5,496.4 433.2,493.9 430.3,491.1 428.1,488.1 426.4,484.9 425.2,481.4 424.7,477.7 424.8,473.8 425.5,469.7 426.9,465.5 428.9,461.0 431.6,456.3 435.0,451.5 439.1,446.5 443.9,441.3 449.5,436.0 455.9,430.4 463.2,424.6 471.3,418.6 480.6,412.2 491.2,405.4 503.8,397.6 522.9,386.5 542.2,375.4 555.7,368.1 567.8,361.8 579.2,356.3 590.0,351.3 600.5,346.8 610.7,342.8 620.7,339.2 630.4,336.0 639.9,333.1 649.1,330.6 658.1,328.5 666.9,326.7 675.4,325.3 683.6,324.2 691.5,323.5 699.2,323.1 706.4,323.0 713.4,323.2 719.9,323.7 726.1,324.6 731.8,325.7 737.2,327.1 742.0,328.8" fill="none" stroke="#0b4653" stroke-width="1.6" opacity="0.95"/>
<polyline points="748.6,325.0 753.2,327.1 757.3,329.5 760.9,332.1 763.8,335.0 766.3,338.2 768.1,341.6 769.3,345.2 769.9,349.1 769.8,353.1 769.1,357.4 767.7,361.9 765.6,366.6 762.8,371.5 759.3,376.5 755.0,381.7 750.0,387.2 744.2,392.8 737.5,398.6 730.0,404.6 721.4,410.9 711.8,417.6 700.7,424.8 687.6,432.8 667.6,444.5 647.4,456.0 633.3,463.7 620.7,470.3 608.8,476.0 597.4,481.2 586.5,485.9 575.8,490.1 565.4,493.9 555.3,497.2 545.3,500.2 535.7,502.8 526.2,505.0 517.0,506.8 508.1,508.3 499.5,509.4 491.2,510.2 483.2,510.6 475.5,510.7 468.3,510.4 461.4,509.9 454.9,509.0 448.9,507.8 443.3,506.3 438.2,504.5 433.6,502.4 429.5,500.0 425.9,497.4 422.9,494.5 420.5,491.3 418.7,487.9 417.5,484.3 416.9,480.4 417.0,476.3 417.7,472.1 419.1,467.6 421.2,462.9 424.0,458.0 427.5,453.0 431.8,447.7 436.8,442.3 442.6,436.7 449.3,430.9 456.8,424.9 465.4,418.6 475.0,411.9 486.1,404.7 499.2,396.7 519.1,385.0 539.4,373.4 553.5,365.8 566.1,359.2 578.0,353.4 589.3,348.3 600.3,343.6 611.0,339.4 621.4,335.6 631.5,332.3 641.5,329.3 651.1,326.7 660.6,324.5 669.8,322.7 678.7,321.2 687.3,320.1 695.6,319.3 703.6,318.9 711.2,318.8 718.5,319.0 725.4,319.6 731.9,320.5 737.9,321.7 743.5,323.2 748.6,325.0" fill="none" stroke="#0c4e4c" stroke-width="1.6" opacity="0.95"/>
<polyline points="755.2,321.2 760.1,323.4 764.4,325.9 768.1,328.6 771.2,331.7 773.8,335.0 775.7,338.5 777.0,342.3 777.7,346.4 777.6,350.6 776.9,355.1 775.5,359.8 773.3,364.7 770.4,369.8 766.8,375.1 762.4,380.5 757.1,386.2 751.1,392.0 744.2,398.1 736.3,404.4 727.4,411.0 717.4,417.9 705.8,425.4 692.1,433.8 671.4,446.0 650.3,458.0 635.6,466.0 622.4,472.8 610.0,478.9 598.1,484.3 586.7,489.1 575.6,493.5 564.7,497.4 554.1,500.9 543.7,504.0 533.6,506.7 523.7,509.0 514.1,510.9 504.8,512.4 495.8,513.5 487.1,514.3 478.7,514.8 470.7,514.8 463.1,514.6 455.9,514.0 449.1,513.0 442.8,511.8 436.9,510.2 431.6,508.3 426.7,506.1 422.4,503.6 418.7,500.8 415.6,497.8 413.0,494.5 411.1,490.9 409.8,487.1 409.1,483.1 409.2,478.8 409.9,474.4 411.3,469.7 413.5,464.8 416.4,459.7 420.0,454.4 424.4,449.0 429.7,443.3 435.7,437.5 442.6,431.4 450.5,425.1 459.4,418.5 469.4,411.6 481.0,404.1 494.7,395.7 515.4,383.5 536.5,371.5 551.2,363.5 564.4,356.6 576.8,350.6 588.7,345.2 600.1,340.4 611.2,336.0 622.1,332.1 632.7,328.6 643.1,325.5 653.2,322.8 663.1,320.5 672.6,318.6 682.0,317.1 691.0,315.9 699.7,315.1 708.1,314.7 716.1,314.6 723.7,314.9 730.9,315.5 737.7,316.4 744.0,317.7 749.9,319.3 755.2,321.2" fill="none" stroke="#0b4653" stroke-width="1.6" opacity="0.95"/>
<polyline points="761.8,317.4 766.9,319.7 771.4,322.3 775.3,325.2 778.6,328.3 781.3,331.8 783.4,335.5 784.7,339.5 785.4,343.7 785.4,348.1 784.7,352.8 783.2,357.7 781.0,362.8 778.0,368.1 774.3,373.6 769.7,379.3 764.3,385.2 758.0,391.3 750.8,397.6 742.6,404.2 733.4,411.0 722.9,418.3 711.0,426.0 696.7,434.8 675.1,447.5 653.1,460.0 637.8,468.3 624.1,475.4 611.2,481.7 598.8,487.3 586.9,492.3 575.3,496.9 564.0,501.0 552.9,504.6 542.1,507.8 531.6,510.6 521.3,513.0 511.3,514.9 501.5,516.5 492.1,517.7 483.0,518.5 474.3,518.9 465.9,519.0 458.0,518.7 450.4,518.1 443.3,517.1 436.7,515.7 430.6,514.1 425.0,512.1 419.9,509.8 415.4,507.2 411.5,504.3 408.2,501.1 405.5,497.7 403.4,494.0 402.0,490.0 401.4,485.8 401.4,481.3 402.1,476.7 403.6,471.8 405.8,466.7 408.7,461.4 412.5,455.9 417.1,450.2 422.5,444.3 428.8,438.2 436.0,431.9 444.2,425.3 453.4,418.5 463.8,411.2 475.8,403.4 490.1,394.7 511.7,382.0 533.7,369.5 549.0,361.1 562.7,354.1 575.6,347.8 588.0,342.2 599.9,337.1 611.5,332.6 622.8,328.5 633.9,324.9 644.7,321.7 655.2,318.9 665.5,316.5 675.5,314.5 685.3,313.0 694.7,311.8 703.8,311.0 712.5,310.5 720.9,310.5 728.8,310.8 736.4,311.4 743.5,312.4 750.1,313.7 756.2,315.4 761.8,317.4" fill="none" stroke="#0c4e4c" stroke-width="1.6" opacity="0.95"/>
<polyline points="768.4,313.6 773.7,316.0 778.5,318.7 782.6,321.7 786.0,325.0 788.9,328.6 791.0,332.5 792.5,336.6 793.2,341.0 793.2,345.6 792.5,350.5 791.0,355.6 788.7,360.9 785.7,366.4 781.8,372.1 777.0,378.1 771.4,384.2 764.9,390.5 757.5,397.1 749.0,403.9 739.4,411.1 728.5,418.6 716.1,426.7 701.2,435.8 678.8,449.0 656.0,462.0 640.0,470.6 625.8,478.0 612.4,484.5 599.5,490.3 587.1,495.6 575.0,500.3 563.3,504.5 551.8,508.3 540.5,511.6 529.5,514.5 518.8,517.0 508.4,519.0 498.2,520.6 488.4,521.8 479.0,522.7 469.8,523.1 461.1,523.2 452.8,522.9 445.0,522.2 437.5,521.1 430.6,519.7 424.2,518.0 418.4,515.9 413.1,513.5 408.3,510.8 404.2,507.8 400.8,504.5 397.9,500.9 395.8,497.0 394.3,492.9 393.6,488.5 393.5,483.8 394.3,479.0 395.8,473.9 398.0,468.6 401.1,463.0 405.0,457.3 409.8,451.4 415.4,445.3 421.9,438.9 429.3,432.4 437.8,425.5 447.4,418.4 458.3,410.9 470.7,402.8 485.6,393.7 508.0,380.5 530.8,367.5 546.7,358.8 561.0,351.5 574.4,345.0 587.3,339.1 599.7,333.9 611.7,329.2 623.5,324.9 635.0,321.2 646.3,317.9 657.3,315.0 668.0,312.5 678.4,310.5 688.6,308.9 698.4,307.6 707.8,306.8 716.9,306.4 725.7,306.3 734.0,306.6 741.8,307.3 749.2,308.3 756.2,309.7 762.6,311.5 768.4,313.6" fill="none" stroke="#0b4653" stroke-width="1.6" opacity="0.95"/>
<polyline points="775.0,309.7 780.6,312.2 785.5,315.1 789.8,318.2 793.4,321.7 796.4,325.4 798.7,329.5 800.2,333.8 801.0,338.3 801.1,343.1 800.3,348.2 798.8,353.5 796.5,359.0 793.3,364.7 789.3,370.7 784.4,376.9 778.6,383.2 771.8,389.8 764.1,396.6 755.3,403.7 745.4,411.1 734.1,418.9 721.2,427.3 705.8,436.8 682.5,450.4 658.8,463.9 642.3,472.9 627.5,480.6 613.6,487.3 600.2,493.4 587.3,498.8 574.8,503.7 562.6,508.1 550.6,512.0 538.9,515.4 527.5,518.4 516.3,521.0 505.5,523.1 494.9,524.7 484.7,526.0 474.9,526.9 465.4,527.3 456.3,527.3 447.7,527.0 439.5,526.3 431.8,525.2 424.6,523.7 417.9,521.9 411.8,519.7 406.2,517.2 401.3,514.4 397.0,511.3 393.4,507.8 390.4,504.1 388.1,500.0 386.6,495.7 385.8,491.2 385.7,486.3 386.5,481.3 388.0,476.0 390.3,470.5 393.5,464.7 397.5,458.8 402.4,452.6 408.2,446.3 415.0,439.7 422.7,432.8 431.5,425.8 441.4,418.4 452.7,410.5 465.6,402.1 481.0,392.7 504.3,379.0 528.0,365.5 544.5,356.5 559.3,348.9 573.2,342.1 586.6,336.1 599.5,330.7 612.0,325.8 624.2,321.4 636.2,317.5 647.9,314.0 659.3,311.1 670.5,308.5 681.3,306.4 691.8,304.7 702.1,303.5 711.9,302.6 721.4,302.2 730.5,302.1 739.1,302.5 747.3,303.2 755.0,304.3 762.2,305.7 768.9,307.6 775.0,309.7" fill="none" stroke="#0c4e4c" stroke-width="1.6" opacity="0.95"/>
<polyline points="781.6,305.9 787.4,308.5 792.6,311.5 797.0,314.7 800.8,318.3 803.9,322.2 806.3,326.4 807.9,330.9 808.8,335.6 808.9,340.6 808.1,345.9 806.6,351.4 804.2,357.1 800.9,363.1 796.8,369.2 791.7,375.6 785.7,382.2 778.7,389.1 770.7,396.1 761.7,403.5 751.4,411.2 739.7,419.3 726.3,428.0 710.4,437.8 686.2,451.9 661.7,465.9 644.5,475.2 629.2,483.2 614.7,490.1 600.9,496.4 587.6,502.0 574.5,507.1 561.8,511.7 549.4,515.7 537.3,519.2 525.4,522.3 513.9,524.9 502.6,527.1 491.7,528.9 481.0,530.2 470.8,531.0 461.0,531.5 451.5,531.5 442.5,531.2 434.0,530.4 426.0,529.2 418.5,527.7 411.5,525.8 405.1,523.6 399.4,521.0 394.2,518.0 389.8,514.7 386.0,511.1 382.9,507.2 380.5,503.1 378.9,498.6 378.0,493.8 377.9,488.8 378.6,483.6 380.2,478.1 382.6,472.4 385.9,466.4 390.0,460.2 395.1,453.8 401.1,447.2 408.1,440.4 416.1,433.3 425.1,426.0 435.4,418.3 447.1,410.2 460.5,401.5 476.4,391.7 500.6,377.5 525.1,363.6 542.3,354.2 557.6,346.3 572.1,339.3 585.9,333.1 599.2,327.4 612.3,322.4 625.0,317.8 637.4,313.8 649.5,310.2 661.4,307.2 672.9,304.5 684.2,302.4 695.1,300.6 705.7,299.3 716.0,298.4 725.8,298.0 735.3,298.0 744.3,298.3 752.8,299.1 760.8,300.2 768.3,301.8 775.3,303.7 781.6,305.9" fill="none" stroke="#0b4653" stroke-width="1.6" opacity="0.95"/>
<polyline points="788.3,302.1 794.3,304.8 799.6,307.9 804.3,311.3 808.2,315.0 811.5,319.0 814.0,323.4 815.7,328.0 816.6,333.0 816.7,338.1 816.0,343.6 814.4,349.3 811.9,355.2 808.5,361.4 804.3,367.8 799.0,374.4 792.9,381.3 785.7,388.3 777.4,395.7 768.0,403.3 757.3,411.2 745.3,419.6 731.4,428.6 714.9,438.8 689.9,453.4 664.5,467.9 646.8,477.5 630.9,485.7 615.9,493.0 601.6,499.4 587.8,505.3 574.3,510.5 561.1,515.2 548.3,519.4 535.7,523.1 523.4,526.2 511.4,528.9 499.7,531.2 488.4,533.0 477.4,534.3 466.7,535.2 456.5,535.7 446.7,535.7 437.4,535.3 428.5,534.5 420.2,533.3 412.4,531.7 405.2,529.7 398.5,527.4 392.5,524.7 387.2,521.6 382.5,518.2 378.6,514.5 375.3,510.4 372.8,506.1 371.1,501.4 370.2,496.5 370.1,491.3 370.8,485.9 372.4,480.2 374.9,474.2 378.2,468.1 382.5,461.7 387.7,455.1 393.9,448.2 401.1,441.1 409.4,433.8 418.8,426.2 429.5,418.3 441.5,409.9 455.4,400.9 471.9,390.7 496.9,376.1 522.3,361.6 540.0,351.9 555.9,343.7 570.9,336.5 585.2,330.0 599.0,324.2 612.5,319.0 625.7,314.3 638.5,310.1 651.1,306.4 663.4,303.2 675.4,300.5 687.1,298.3 698.4,296.5 709.4,295.2 720.1,294.3 730.3,293.8 740.1,293.8 749.4,294.2 758.3,295.0 766.6,296.2 774.4,297.8 781.6,299.7 788.3,302.1" fill="none" stroke="#0c4e4c" stroke-width="1.6" opacity="0.95"/>
<polyline points="794.9,298.3 801.1,301.1 806.7,304.3 811.5,307.8 815.6,311.7 819.0,315.9 821.6,320.4 823.4,325.2 824.4,330.3 824.5,335.6 823.8,341.3 822.2,347.2 819.6,353.3 816.2,359.7 811.8,366.3 806.4,373.2 800.0,380.3 792.6,387.6 784.0,395.2 774.3,403.1 763.3,411.3 750.9,419.9 736.5,429.3 719.5,439.8 693.6,454.9 667.4,469.9 649.0,479.8 632.6,488.3 617.1,495.8 602.3,502.5 588.0,508.5 574.0,513.9 560.4,518.8 547.1,523.1 534.1,526.9 521.3,530.2 508.9,532.9 496.8,535.3 485.1,537.1 473.7,538.5 462.7,539.4 452.1,539.8 441.9,539.9 432.2,539.4 423.0,538.6 414.4,537.4 406.3,535.7 398.8,533.6 391.9,531.2 385.7,528.4 380.1,525.2 375.3,521.7 371.2,517.8 367.8,513.6 365.2,509.1 363.4,504.3 362.4,499.2 362.3,493.8 363.0,488.2 364.6,482.3 367.2,476.1 370.6,469.8 375.0,463.1 380.4,456.3 386.8,449.2 394.2,441.9 402.8,434.3 412.5,426.4 423.5,418.2 435.9,409.5 450.3,400.2 467.3,389.7 493.2,374.6 519.4,359.6 537.8,349.6 554.2,341.2 569.7,333.7 584.5,327.0 598.8,321.0 612.8,315.6 626.4,310.7 639.7,306.4 652.7,302.6 665.4,299.3 677.9,296.5 690.0,294.2 701.7,292.4 713.1,291.0 724.1,290.1 734.7,289.6 744.9,289.6 754.6,290.0 763.7,290.9 772.4,292.1 780.5,293.8 788.0,295.8 794.9,298.3" fill="none" stroke="#0b4653" stroke-width="1.6" opacity="0.95"/>
<polyline points="801.5,294.5 807.9,297.4 813.7,300.7 818.7,304.3 823.0,308.3 826.5,312.7 829.3,317.3 831.1,322.3 832.2,327.6 832.3,333.1 831.6,339.0 829.9,345.1 827.3,351.4 823.8,358.0 819.3,364.9 813.7,372.0 807.1,379.3 799.5,386.9 790.7,394.7 780.7,402.8 769.3,411.3 756.4,420.3 741.6,429.9 724.0,440.7 697.3,456.4 670.2,471.9 651.3,482.2 634.3,490.9 618.3,498.6 603.0,505.5 588.2,511.7 573.8,517.3 559.7,522.3 545.9,526.8 532.5,530.7 519.3,534.1 506.5,536.9 493.9,539.3 481.8,541.2 470.0,542.6 458.6,543.5 447.6,544.0 437.1,544.0 427.1,543.6 417.6,542.7 408.6,541.4 400.2,539.7 392.5,537.5 385.3,535.0 378.9,532.1 373.1,528.8 368.1,525.2 363.8,521.1 360.2,516.8 357.5,512.1 355.7,507.2 354.6,501.9 354.5,496.3 355.2,490.5 356.9,484.4 359.4,478.0 363.0,471.4 367.5,464.6 373.1,457.5 379.7,450.2 387.3,442.6 396.1,434.8 406.1,426.6 417.5,418.1 430.4,409.2 445.2,399.6 462.8,388.7 489.4,373.1 516.6,357.6 535.5,347.3 552.5,338.6 568.5,330.9 583.8,323.9 598.6,317.7 613.0,312.1 627.1,307.1 640.9,302.7 654.3,298.8 667.5,295.4 680.3,292.5 692.9,290.2 705.0,288.3 716.8,286.9 728.2,285.9 739.2,285.5 749.7,285.5 759.7,285.9 769.2,286.8 778.2,288.1 786.6,289.8 794.3,291.9 801.5,294.5" fill="none" stroke="#0c4e4c" stroke-width="1.6" opacity="0.95"/>
<polyline points="808.1,290.6 814.8,293.7 820.8,297.1 826.0,300.8 830.4,305.0 834.1,309.5 836.9,314.3 838.9,319.4 840.0,324.9 840.1,330.6 839.4,336.7 837.7,343.0 835.1,349.5 831.4,356.4 826.8,363.4 821.1,370.7 814.3,378.3 806.4,386.1 797.3,394.2 787.0,402.6 775.3,411.4 762.0,420.6 746.8,430.6 728.6,441.7 701.1,457.9 673.1,473.8 653.5,484.5 636.0,493.5 619.5,501.4 603.7,508.6 588.4,515.0 573.5,520.7 559.0,525.9 544.8,530.5 530.9,534.5 517.3,538.0 504.0,540.9 491.1,543.4 478.5,545.3 466.3,546.8 454.5,547.7 443.2,548.2 432.3,548.2 421.9,547.7 412.1,546.8 402.8,545.5 394.2,543.7 386.1,541.5 378.7,538.8 372.0,535.8 366.0,532.4 360.8,528.6 356.4,524.5 352.7,520.0 349.9,515.2 347.9,510.0 346.8,504.6 346.7,498.8 347.4,492.8 349.1,486.5 351.7,479.9 355.4,473.1 360.0,466.0 365.7,458.7 372.5,451.2 380.4,443.4 389.5,435.3 399.8,426.9 411.5,418.1 424.8,408.9 440.0,398.9 458.2,387.7 485.7,371.6 513.7,355.6 533.3,345.0 550.8,336.0 567.3,328.0 583.1,320.9 598.4,314.5 613.3,308.7 627.8,303.6 642.0,299.0 655.9,295.0 669.5,291.5 682.8,288.5 695.7,286.1 708.3,284.2 720.5,282.7 732.3,281.8 743.6,281.3 754.5,281.3 764.9,281.7 774.7,282.7 784.0,284.0 792.6,285.8 800.7,288.0 808.1,290.6" fill="none" stroke="#0b4653" stroke-width="1.6" opacity="0.95"/>
<polygon points="611.0,348.0 622.0,338.0 706.0,386.0 706.0,399.0 640.0,372.0" fill="#0e5a1a" stroke="none" stroke-width="0" opacity="0.85"/>
</g>
<polygon points="610.5,347.5 622.0,339.5 641.0,350.5 641.0,361.0 629.0,367.5 610.5,357.5" fill="#0d551a" stroke="none" stroke-width="0" />
<polyline points="612.0,352.0 628.0,361.0 640.0,355.0" fill="none" stroke="#2f9a45" stroke-width="0.8" />
<polyline points="612.0,355.5 628.0,364.5 640.0,358.5" fill="none" stroke="#2f9a45" stroke-width="0.7" />
<ellipse cx="692" cy="388" rx="5.2" ry="3.0" fill="none" stroke="#0f5a70" stroke-width="1.2" opacity="0.8"/>
<ellipse cx="692" cy="388" rx="9.8" ry="5.5" fill="none" stroke="#0f5a70" stroke-width="1.2" opacity="0.8"/>
<ellipse cx="692" cy="388" rx="14.2" ry="8.1" fill="none" stroke="#0f5a70" stroke-width="1.2" opacity="0.8"/>
<ellipse cx="616" cy="434" rx="5.2" ry="3.0" fill="none" stroke="#0f5a70" stroke-width="1.2" opacity="0.8"/>
<ellipse cx="616" cy="434" rx="9.8" ry="5.5" fill="none" stroke="#0f5a70" stroke-width="1.2" opacity="0.8"/>
<ellipse cx="616" cy="434" rx="14.2" ry="8.1" fill="none" stroke="#0f5a70" stroke-width="1.2" opacity="0.8"/>
<line x1="558.5" y1="483.5" x2="698.7" y2="405.0" stroke="#3aa04a" stroke-width="0.9" />
<line x1="556.9" y1="471.4" x2="558.5" y2="483.5" stroke="#0a3a10" stroke-width="1.0" />
<polygon points="472.2,421.3 475.0,419.7 556.9,471.4 554.1,473.0" fill="#0c5417" stroke="none" stroke-width="0" />
<line x1="475.0" y1="419.7" x2="556.9" y2="471.4" stroke="#062b0b" stroke-width="1.4" />
<line x1="472.2" y1="421.3" x2="554.1" y2="473.0" stroke="#083a10" stroke-width="0.7" />
<line x1="452.4" y1="433.8" x2="536.3" y2="482.2" stroke="#07300d" stroke-width="1.1" />
<line x1="465.4" y1="474.7" x2="517.9" y2="444.4" stroke="#07300d" stroke-width="1.0" />
<ellipse cx="697" cy="358.6" rx="14.2" ry="8.2" fill="#137a1e" stroke="#052508" stroke-width="1.1" transform="rotate(-3 697 358.6)"/>
<circle cx="697.0" cy="358.6" r="2.5" fill="#0a0a0a"/>
<line x1="744.5" y1="362.0" x2="708.5" y2="384.0" stroke="#74b283" stroke-width="1.1" />
<path d="M745,381.5 L704,405 A8.6,8.8 0 0 0 711,421.5 L745,402" fill="#0b4e16" stroke="#052508" stroke-width="1.1"/>
<circle cx="707.5" cy="412.3" r="2.4" fill="#0a0a0a"/>
<line x1="711.5" y1="396.5" x2="744.0" y2="378.0" stroke="#06300c" stroke-width="1.0" />
<ellipse cx="486.6" cy="521.4" rx="5.6" ry="8.6" fill="none" stroke="#052508" stroke-width="0.9" transform="rotate(-12 486.6 521.4)"/>
<ellipse cx="487" cy="521.6" rx="2.1" ry="2.9" fill="#041a06"/>
<circle cx="422.3" cy="532.3" r="2.6" fill="#cfd6e6" stroke="#7d86a8" stroke-width="0.8" opacity="0.9"/>
<polyline points="477.5,420.0 473.4,421.6 619.8,337.0 625.8,340.4" fill="none" stroke="#0a0a0a" stroke-width="1.5" stroke-linejoin="miter"/>
<polygon points="628.0,338.5 706.0,382.5 706.0,388.5 628.0,344.5" fill="#a7a899" stroke="none" stroke-width="0" />
<polygon points="628.0,344.5 706.0,388.5 706.0,390.5 628.0,346.5" fill="#5e6450" stroke="none" stroke-width="0" />
<polyline points="478.5,417.0 478.5,389.0 598.0,321.5 598.0,338.0" fill="none" stroke="#f2f4b4" stroke-width="1.2" />
<polyline points="493.0,398.0 493.0,381.0 534.0,358.0 534.0,398.0" fill="none" stroke="#f2f4b4" stroke-width="1.1" />
<polyline points="534.0,360.0 600.0,361.0 607.0,357.0" fill="none" stroke="#f2f4b4" stroke-width="1.0" />
<polyline points="611.0,336.0 611.0,320.0 640.0,335.0" fill="none" stroke="#f0f27a" stroke-width="1.2" />
<polyline points="560.0,385.0 600.0,360.0 603.0,364.0 566.0,388.0" fill="none" stroke="#eef08a" stroke-width="1.0" />
<line x1="516.5" y1="414.0" x2="516.5" y2="443.5" stroke="#e6ee3a" stroke-width="1.0" />
<line x1="523.5" y1="415.0" x2="523.5" y2="447.5" stroke="#a8ea55" stroke-width="1.0" />
<line x1="530.0" y1="417.0" x2="530.0" y2="451.2" stroke="#e6ee3a" stroke-width="1.0" />
<line x1="535.5" y1="398.0" x2="535.5" y2="456.3" stroke="#a8ea55" stroke-width="1.0" />
<line x1="541.5" y1="396.0" x2="541.5" y2="459.8" stroke="#e6ee3a" stroke-width="1.0" />
<line x1="546.5" y1="394.0" x2="546.5" y2="462.6" stroke="#a8ea55" stroke-width="1.0" />
<line x1="552.0" y1="393.0" x2="552.0" y2="465.8" stroke="#e6ee3a" stroke-width="1.0" />
<line x1="555.5" y1="384.0" x2="555.5" y2="412.0" stroke="#e6ee3a" stroke-width="1.0" />
<line x1="558.5" y1="384.0" x2="558.5" y2="412.0" stroke="#e6ee3a" stroke-width="1.0" />
<line x1="562.0" y1="384.0" x2="562.0" y2="412.0" stroke="#e6ee3a" stroke-width="1.0" />
<line x1="516.0" y1="413.0" x2="659.0" y2="383.5" stroke="#a8ea55" stroke-width="0.9" />
<line x1="500.0" y1="424.0" x2="575.0" y2="405.0" stroke="#a8ea55" stroke-width="0.8" />
<line x1="551.0" y1="392.0" x2="600.0" y2="421.0" stroke="#a8ea55" stroke-width="0.8" />
<line x1="540.0" y1="402.0" x2="640.0" y2="378.0" stroke="#e6ee3a" stroke-width="0.8" />
<line x1="560.0" y1="420.0" x2="600.0" y2="445.0" stroke="#a8ea55" stroke-width="0.7" />
<line x1="552.0" y1="396.0" x2="655.0" y2="360.0" stroke="#a8ea55" stroke-width="0.8" />
<polyline points="570.7,480.0 570.7,444.0 630.4,413.7 630.4,448.0" fill="none" stroke="#e6ee3a" stroke-width="1.1" />
<polyline points="574.7,482.0 574.7,446.5 622.0,419.0 622.0,449.5" fill="none" stroke="#a8ea55" stroke-width="1.0" />
<polyline points="574.7,481.0 630.0,449.0" fill="none" stroke="#a8ea55" stroke-width="0.9" />
<polyline points="572.0,470.0 628.0,439.0" fill="none" stroke="#a8ea55" stroke-width="0.8" />
<polyline points="630.4,425.0 636.0,433.0 633.0,437.0" fill="none" stroke="#d8e05a" stroke-width="1.0" />
<line x1="608.3" y1="392.0" x2="608.3" y2="436.0" stroke="#8be85a" stroke-width="1.3" />
<line x1="611.0" y1="395.0" x2="611.0" y2="430.0" stroke="#e6ee3a" stroke-width="0.8" />
<path d="M608.3,381.5 L611.6,392.5 L605,392.5 Z" fill="#3fe04e"/>
<line x1="633.3" y1="331.5" x2="633.3" y2="366.4" stroke="#e6ee3a" stroke-width="1.0" />
<line x1="638.0" y1="329.9" x2="638.0" y2="366.4" stroke="#a8ea55" stroke-width="1.0" />
<line x1="643.6" y1="335.4" x2="643.6" y2="368.0" stroke="#e6ee3a" stroke-width="1.0" />
<line x1="652.3" y1="341.0" x2="652.3" y2="371.2" stroke="#a8ea55" stroke-width="1.0" />
<line x1="657.9" y1="344.2" x2="657.9" y2="375.2" stroke="#e6ee3a" stroke-width="1.0" />
<line x1="664.3" y1="347.4" x2="664.3" y2="378.4" stroke="#a8ea55" stroke-width="1.0" />
<line x1="669.8" y1="350.5" x2="669.8" y2="381.5" stroke="#e6ee3a" stroke-width="1.0" />
<line x1="675.4" y1="354.5" x2="675.4" y2="407.0" stroke="#e6ee3a" stroke-width="1.0" />
<line x1="681.0" y1="357.7" x2="681.0" y2="408.6" stroke="#e6ee3a" stroke-width="1.0" />
<line x1="685.7" y1="360.0" x2="685.7" y2="386.3" stroke="#e6ee3a" stroke-width="1.0" />
<line x1="704.0" y1="372.8" x2="704.0" y2="402.2" stroke="#a8ea55" stroke-width="1.0" />
<line x1="708.0" y1="372.8" x2="708.0" y2="402.2" stroke="#a8ea55" stroke-width="1.0" />
<polyline points="633.3,331.5 708.0,373.0" fill="none" stroke="#e6ee3a" stroke-width="1.0" />
<polyline points="633.0,340.0 700.0,378.0" fill="none" stroke="#a8ea55" stroke-width="0.8" />
<polyline points="633.3,347.0 686.0,377.0 708.0,389.0" fill="none" stroke="#e6ee3a" stroke-width="0.8" />
<polyline points="686.0,360.0 708.0,373.0 708.0,402.0" fill="none" stroke="#e6ee3a" stroke-width="0.9" />
<polyline points="610.0,362.0 675.0,384.0 640.0,398.0" fill="none" stroke="#a8ea55" stroke-width="0.8" />
<line x1="704.0" y1="390.0" x2="704.0" y2="402.0" stroke="#b4321e" stroke-width="1.0" />
<ellipse cx="550.8" cy="389.5" rx="8.6" ry="5" fill="#f4f4ee" stroke="#0a0a0a" stroke-width="1.3" stroke-dasharray="3 1.6"/><ellipse cx="550.8" cy="390.7" rx="5.2" ry="3.4" fill="#d8d8c8"/><circle cx="551.0999999999999" cy="390.0" r="2.6" fill="#050505"/>
<ellipse cx="617.8" cy="343" rx="8.6" ry="5" fill="#f4f4ee" stroke="#0a0a0a" stroke-width="1.3" stroke-dasharray="3 1.6"/><ellipse cx="617.8" cy="344.2" rx="5.2" ry="3.4" fill="#d8d8c8"/><circle cx="618.0999999999999" cy="343.5" r="2.6" fill="#050505"/>
<circle cx="582.4" cy="407.2" r="2.6" fill="#0a0a0a"/>
<circle cx="614.2" cy="426.0" r="2.6" fill="#0a0a0a"/>
<circle cx="649.0" cy="350.0" r="2.6" fill="#0a0a0a"/>
<circle cx="658.5" cy="357.0" r="2.6" fill="#0a0a0a"/>
<circle cx="693.0" cy="386.0" r="2.6" fill="#0a0a0a"/>
<circle cx="708.5" cy="384.3" r="2.6" fill="#5a2a3a" stroke="#e3c3cf" stroke-width="1.2"/>
<line x1="703.0" y1="337.2" x2="948.7" y2="195.7" stroke="#084010" stroke-width="1.4" stroke-dasharray="11 4.5"/>
<line x1="423.5" y1="499.0" x2="283.0" y2="580.2" stroke="#1c1c1c" stroke-width="1.0" stroke-dasharray="8 4"/>
<line x1="465.4" y1="474.7" x2="423.5" y2="499.0" stroke="#0a3f12" stroke-width="1.3" stroke-dasharray="8 4"/>
<circle cx="283.0" cy="580.2" r="2.6" fill="#fff" stroke="#333" stroke-width="0.8"/>
<circle cx="411.0" cy="507.3" r="2.7" fill="#0a0a0a"/>
<circle cx="418.3" cy="502.2" r="2.7" fill="#0a0a0a"/>
<circle cx="450.8" cy="434.4" r="2.6" fill="#0a0a0a"/>
<circle cx="465.4" cy="475.0" r="2.6" fill="#0a0a0a"/>
<circle cx="519.2" cy="443.2" r="2.6" fill="#0a0a0a"/>
<circle cx="556.6" cy="471.2" r="2.6" fill="#0a0a0a"/>
<defs><linearGradient id="gtool" x1="0" y1="0" x2="1" y2="0"><stop offset="0" stop-color="#bdbdbd"/><stop offset="0.35" stop-color="#cecece"/><stop offset="1" stop-color="#b9b9b9"/></linearGradient><linearGradient id="gtool2" x1="0" y1="0" x2="1" y2="0"><stop offset="0" stop-color="#e6d2b8"/><stop offset="0.4" stop-color="#f1e2cc"/><stop offset="1" stop-color="#dcc6a8"/></linearGradient></defs>
<path d="M468.3,338 V374 A8.8,3.6 0 0 0 485.9,374 V338 Z" fill="url(#gtool2)"/>
<path d="M466,179 A11,4.8 0 0 1 488,179 V337 A11,4.8 0 0 1 466,337 Z" fill="url(#gtool)" opacity="0.86"/>
<ellipse cx="477" cy="338" rx="9" ry="4.2" fill="#c7b299" opacity="0.9"/>
<ellipse cx="477" cy="179.5" rx="10.4" ry="4.2" fill="#d6d6d6"/>
<path d="M474.3,361.8 L479.4,361.5 L477.2,373.2 Z" fill="#e6261f"/>
<line x1="477.0" y1="378.0" x2="477.0" y2="418.0" stroke="#e2e23a" stroke-width="1.0" />
</svg>
<div class="abs" style="left:0;top:0;width:1280px;height:22px;background:#fff"></div>
<div class="abs" style="left:0;top:0;width:1280px;height:1.5px;background:#3a3a3a"></div>
<div class="abs" style="left:0;top:21.5px;width:1280px;height:21.5px;background:#f1f1f1"></div>
<div class="abs" style="left:0;top:21.5px;width:1280px;height:1.5px;background:#c6c6c6"></div>
<div class="abs" style="left:0;top:21.5px;width:136px;height:21px;background:#c9c9c9"></div>
<div class="abs" style="left:136px;top:21.5px;width:30px;height:21px;background:#b9b9b9"></div>
<div class="abs" style="left:1131px;top:21.5px;width:149px;height:21px;background:#cacaca"></div>
<div class="abs" style="left:1131px;top:21.5px;width:26px;height:21px;background:#bdbdbd"></div>
<div class="abs" style="left:1157px;top:21.5px;width:23px;height:21px;background:#0e96e2"></div>
<div class="abs" style="left:0;top:43px;width:1280px;height:57px;background:#f1f1f1"></div>
<div class="abs" style="left:0;top:99px;width:1280px;height:2px;background:linear-gradient(#e6e6e6,#f8f8f8)"></div>
<div class="t " style="left:19px;top:6.5px;font-size:8.45px;color:#969696">standard sight stand v47 (neomunitor) - Autodesk Fusion</div>
<div class="t " style="left:606.4px;top:29.5px;font-size:8.3px;color:#333">standard sight stand v47</div>
<div class="abs" style="left:10px;top:50.5px;width:78px;height:42px;border:1px solid #e2e2e2;border-radius:3px;background:#f3f3f3"></div>
<div class="t " style="left:15.5px;top:66.8px;font-size:7.6px;font-weight:bold;color:#222">MANUFACTURE</div>
<svg class="abs" style="left:78.6px;top:69.4px" width="5" height="4" viewBox="0 0 5 4"><path d="M0.3 0.3 H4.5 L2.4 3.2 Z" fill="#222"/></svg>
<div class="t " style="left:106.5px;top:46.5px;font-size:7.65px;font-weight:bold;color:#2d8fc6">MILLING</div>
<div class="abs" style="left:99px;top:57px;width:48px;height:2px;background:#2d8fc6"></div>
<div class="t tab" style="left:171px;top:46.5px;">TURNING</div>
<div class="t tab" style="left:239px;top:46.5px;">ADDITIVE</div>
<div class="t tab" style="left:307.8px;top:46.5px;">INSPECTION</div>
<div class="t tab" style="left:386.7px;top:46.5px;">FABRICATION</div>
<div class="t tab" style="left:468.6px;top:46.5px;">UTILITIES</div>
<div class="t grp" style="left:105.7px;top:88.8px;">SETUP <span style="font-size:5.5px;color:#222;position:relative;top:-0.8px">&#9660;</span></div>
<div class="t grp" style="left:196.6px;top:88.8px;">2D <span style="font-size:5.5px;color:#222;position:relative;top:-0.8px">&#9660;</span></div>
<div class="t grp" style="left:339px;top:88.8px;">3D <span style="font-size:5.5px;color:#222;position:relative;top:-0.8px">&#9660;</span></div>
<div class="t grp" style="left:453.7px;top:88.8px;">DRILLING <span style="font-size:5.5px;color:#222;position:relative;top:-0.8px">&#9660;</span></div>
<div class="t grp" style="left:518.6px;top:88.8px;">MULTI-AXIS <span style="font-size:5.5px;color:#222;position:relative;top:-0.8px">&#9660;</span></div>
<div class="t grp" style="left:622px;top:88.8px;">MODIFY <span style="font-size:5.5px;color:#222;position:relative;top:-0.8px">&#9660;</span></div>
<div class="t grp" style="left:733px;top:88.8px;">ACTIONS <span style="font-size:5.5px;color:#222;position:relative;top:-0.8px">&#9660;</span></div>
<div class="t grp" style="left:845px;top:88.8px;">MANAGE <span style="font-size:5.5px;color:#222;position:relative;top:-0.8px">&#9660;</span></div>
<div class="t grp" style="left:940px;top:88.8px;">INSPECT <span style="font-size:5.5px;color:#222;position:relative;top:-0.8px">&#9660;</span></div>
<div class="t grp" style="left:998.7px;top:88.8px;">SELECT <span style="font-size:5.5px;color:#222;position:relative;top:-0.8px">&#9660;</span></div>
<div class="sep" style="left:156px"></div>
<div class="sep" style="left:254px"></div>
<div class="sep" style="left:441px"></div>
<div class="sep" style="left:508.5px"></div>
<div class="sep" style="left:576px"></div>
<div class="sep" style="left:704px"></div>
<div class="sep" style="left:802px"></div>
<div class="sep" style="left:929px"></div>
<div class="sep" style="left:988px"></div>
<div class="abs" style="left:0;top:0;width:1.8px;height:755px;background:#1c1c1c"></div>
<svg class="abs ic" style="left:96px;top:61px;overflow:visible;" width="26" height="24" viewBox="0 0 26 24"><path d="M1.2 2 L1.2 17.5 L12 17.5 M1.2 2 L7 2 L9 4 L21 4 L21 11" fill="#f4f2f0" stroke="#6b6b6b" stroke-width="1.3" stroke-linejoin="round"/><path d="M1.5 4.2 H8" stroke="#8a8a8a" stroke-width="1"/><path d="M18 11.2 L24 14 L18 17 L12 14 Z" fill="#e4f0fa" stroke="#6fa4d2" stroke-width="0.6"/><path d="M12 14 L18 17 L18 22 L12 18.6 Z" fill="#4f8cc4"/><path d="M24 14 L18 17 L18 22 L24 18.6 Z" fill="#3a74ab"/></svg>
<svg class="abs ic" style="left:127.5px;top:60.8px;overflow:visible;" width="21" height="23.5" viewBox="0 0 21 23.5"><rect x="1" y="1" width="19" height="21.5" fill="#fbfbfb" stroke="#747474" stroke-width="1.7"/><text x="10.6" y="11" font-size="8.8" font-weight="bold" fill="#3d8fc3" text-anchor="middle" font-family="Liberation Sans">G</text><path d="M5.4 14.5 H17.5 M5.4 18.6 H17.5" stroke="#555" stroke-width="1.2"/><circle cx="5" cy="14.5" r="1.1" fill="#222"/><circle cx="5" cy="18.6" r="1.1" fill="#222"/></svg>
<svg class="abs ic" style="left:164px;top:60.5px;overflow:visible;" width="24" height="23" viewBox="0 0 24 23"><path d="M3 12 L16 2.5 L22.5 6 L22.5 11.5 L10 21.5 L3.5 17 Z" fill="#a9cdee"/><g stroke-linecap="round"><path d="M3.2 12.6 L17.6 3.2" stroke="#4a5a70" stroke-width="5.2"/><path d="M3.2 12.6 L17.6 3.2" stroke="#4494dc" stroke-width="3.6"/><path d="M5.2 16.2 L20.6 6.2" stroke="#4a5a70" stroke-width="5.2"/><path d="M5.2 16.2 L20.6 6.2" stroke="#4494dc" stroke-width="3.6"/><path d="M9.5 19 L21.6 10.6" stroke="#7fb6e6" stroke-width="3.2"/></g><ellipse cx="17.8" cy="3.2" rx="1.4" ry="1.2" fill="#eef5fb"/><ellipse cx="3.6" cy="12.6" rx="1.2" ry="1.3" fill="#eef5fb"/><ellipse cx="5.6" cy="16.2" rx="1.2" ry="1.3" fill="#eef5fb"/></svg>
<svg class="abs ic" style="left:194px;top:61.5px;overflow:visible;" width="24" height="22.5" viewBox="0 0 24 22.5"><path d="M12 0.8 L22.6 7.2 L22.6 14.2 L12 21.4 L1.2 14.2 L1.2 7.2 Z" fill="#f4f4f4" stroke="#6d6d6d" stroke-width="1.2" stroke-linejoin="round"/><path d="M12 5.4 L20.4 11 L12 17.6 L3.6 11 Z" fill="#a9cbe9"/><path d="M12 7.6 L18.2 11.6 L12 16.2 L5.8 11.6 Z" fill="#3f85c9"/><path d="M8 12 Q12 15 16 12" fill="none" stroke="#1f5aa0" stroke-width="1.5"/></svg>
<svg class="abs ic" style="left:225px;top:62.5px;overflow:visible;" width="22" height="20" viewBox="0 0 22 20"><path d="M11 0.8 L21.4 8.6 L11 18.6 L0.6 8.6 Z" fill="#cfe3f4" stroke="#7ab2de" stroke-width="0.9" stroke-linejoin="round"/><path d="M3.2 8 L11 13.4 L18.8 8 L18.8 10.6 L11 16.6 L3.2 10.6 Z" fill="#5a93c6"/><path d="M11 1.8 L18.8 8 L11 13.4 L3.2 8 Z" fill="#f6f9fc"/></svg>
<svg class="abs ic" style="left:262px;top:61.5px;overflow:visible;" width="23" height="22.5" viewBox="0 0 23 22.5"><path d="M6.5 1 H21.6 V16 L16.5 21.5 H1.2 V6.5 Z" fill="#d9e4ee" stroke="#5e5e5e" stroke-width="1.3" stroke-linejoin="round"/><path d="M6.2 3 H20 V15 L15.4 19.4 H3.4 V6.6 Z" fill="#9cc7ea"/><path d="M6.5 6.5 C10 5 14 7.6 19 5.6 M6 10.2 C10 8.6 14 11.4 19 9.4 M6.4 14 C10 12.6 14 15 18.6 13.4" fill="none" stroke="#2a6cb8" stroke-width="2"/></svg>
<svg class="abs ic" style="left:291px;top:60px;overflow:visible;" width="28" height="24" viewBox="0 0 28 24"><path d="M1 13.5 L14 6 L22 10.5 L9 20.5 Z" fill="#c9d9e8" opacity="0.9"/><path d="M1 13.5 L9 20.5 L9 23 L1 16 Z" fill="#dfe6ee"/><path d="M9 20.5 L22 10.5 L22 13 L9 23 Z" fill="#b6c8da" opacity="0.8"/><circle cx="17.8" cy="7" r="7.4" fill="#b8ecff" opacity="0.6"/><circle cx="17.8" cy="7" r="5.7" fill="#1788b4"/><path d="M21.1,8.6 A3.7,3.7 0 0 1 15.200000000000001,9.6" fill="none" stroke="#fff" stroke-width="1.1"/><path d="M14.9,9.9 L15.5,5.7 L16.7,6.9 L19.1,4.1 L20.7,5.7 L17.900000000000002,8.1 L19.1,9.3 Z" fill="#fff"/></svg>
<svg class="abs ic" style="left:321.5px;top:62.5px;overflow:visible;" width="23" height="20.5" viewBox="0 0 23 20.5"><path d="M6.5 1 H21.8 V7 L15.5 12 H4.2 Z" fill="#dfe3e8" stroke="#707070" stroke-width="0.9"/><path d="M6.5 1 H21.8 L20 3.4 H5.4 Z" fill="#2f6fb4"/><path d="M2 12.5 H15.5 L21.8 7 V13.5 L15 19.6 H1 Z" fill="#dde2e7" stroke="#6a6a6a" stroke-width="0.9"/><path d="M2.6 12.4 H15.4 L17.6 10.4 H5 Z" fill="#2f6fb4"/><path d="M1 17 H14.6" stroke="#6a6a6a" stroke-width="1.1"/></svg>
<svg class="abs ic" style="left:352px;top:60.8px;overflow:visible;" width="24" height="22.5" viewBox="0 0 24 22.5"><path d="M5.5 1 H22.6 V14.5 L17 21.5 H1 V8 Z" fill="#e3e7eb" stroke="#6a6a6a" stroke-width="1.3" stroke-linejoin="round"/><path d="M2.4 8.6 Q9 2.6 17.4 3.6 L17 20 H2.4 Z" fill="#7fb4e4"/><path d="M17.2 8 L22 2" stroke="#6a6a6a" stroke-width="1"/><path d="M4.5 19 C6 15 7 8 9.6 6 C11 9 9 16 8.6 19 C10 19.6 11 12 13 6 C15.2 5 14 14 13.4 18.6" fill="none" stroke="#245fa8" stroke-width="1.2"/></svg>
<svg class="abs ic" style="left:382.5px;top:63.5px;overflow:visible;" width="23" height="18" viewBox="0 0 23 18"><ellipse cx="11.4" cy="11.4" rx="10.6" ry="5.4" fill="#e8eef4" stroke="#7a8794" stroke-width="1"/><path d="M1.6 10.4 C2 3 6.6 0.8 11.4 0.8 C16.4 0.8 20.8 3 21.2 10.4 C18 14 5 14 1.6 10.4 Z" fill="#4a90d2"/><ellipse cx="11.4" cy="6.4" rx="6.2" ry="3.2" fill="none" stroke="#235fa5" stroke-width="1.1"/><ellipse cx="11.4" cy="6" rx="2.6" ry="1.3" fill="none" stroke="#235fa5" stroke-width="0.9"/></svg>
<svg class="abs ic" style="left:412px;top:61.5px;overflow:visible;" width="23" height="22" viewBox="0 0 23 22"><path d="M1.6 16.6 L5 12.6 H18 L21.6 16.6 L19 20.8 H2.6 Z" fill="#dde3e9" stroke="#737b84" stroke-width="1"/><path d="M4.4 15 C6 10 8 6 9.6 1.6 C10.6 0.4 12.4 0.4 13.2 1.6 C15 6 18 10 19.6 13.6 C16 18 8 18 4.4 15 Z" fill="#4a90d2"/><path d="M8 5.6 Q11.6 7.4 14.6 5.2 M6.6 9.4 Q11.6 12 16.8 8.8 M5.4 13 Q11.6 16.4 18.8 12.2" fill="none" stroke="#a9d0f0" stroke-width="1"/></svg>
<svg class="abs ic" style="left:448px;top:61px;overflow:visible;" width="25" height="23" viewBox="0 0 25 23"><path d="M1.5 17.2 L9 6 H24 L16.5 17.2 Z" fill="#ececec" stroke="#4d4d4d" stroke-width="1.3" stroke-linejoin="round"/><path d="M1.5 15 L15 15" stroke="#4d4d4d" stroke-width="1"/><rect x="9.2" y="1.5" width="7" height="20" rx="3" fill="#cfcfcf" stroke="#555" stroke-width="1.1"/><path d="M9.6 7 L16 3.6 M9.6 10.6 L16 7.2 M9.6 19.6 L16 16.2" stroke="#777" stroke-width="1.2"/><path d="M16.4 17 L21 10" stroke="#3a8a5a" stroke-width="0.8"/></svg>
<svg class="abs ic" style="left:479px;top:60px;overflow:visible;" width="26" height="24" viewBox="0 0 26 24"><path d="M3 14 L12 9 L22 12.5 L13 18 Z" fill="#e0e3e6"/><path d="M11 18 L13 22 L17 21 L16 17 Z" fill="#d5d5d5"/><path d="M2.4 4.6 H6.4 M4.4 2.6 V6.6" stroke="#e88a90" stroke-width="1.1"/><circle cx="16.8" cy="7" r="7.4" fill="#b8ecff" opacity="0.6"/><circle cx="16.8" cy="7" r="5.7" fill="#1788b4"/><path d="M20.1,8.6 A3.7,3.7 0 0 1 14.200000000000001,9.6" fill="none" stroke="#fff" stroke-width="1.1"/><path d="M13.9,9.9 L14.5,5.7 L15.700000000000001,6.9 L18.1,4.1 L19.7,5.7 L16.900000000000002,8.1 L18.1,9.3 Z" fill="#fff"/></svg>
<svg class="abs ic" style="left:515px;top:60px;overflow:visible;" width="26" height="24" viewBox="0 0 26 24"><path d="M2 8 H12 V17 H2 Z" fill="#bcd3e8" opacity="0.8"/><path d="M7 13 L17 13 L12 22 Z" fill="#c5d9ec" opacity="0.8"/><path d="M5 5 H11 V10 H5 Z" fill="#d2dfea"/><circle cx="18.8" cy="7" r="7.4" fill="#b8ecff" opacity="0.6"/><circle cx="18.8" cy="7" r="5.7" fill="#1788b4"/><path d="M22.1,8.6 A3.7,3.7 0 0 1 16.2,9.6" fill="none" stroke="#fff" stroke-width="1.1"/><path d="M15.9,9.9 L16.5,5.7 L17.7,6.9 L20.1,4.1 L21.7,5.7 L18.900000000000002,8.1 L20.1,9.3 Z" fill="#fff"/></svg>
<svg class="abs ic" style="left:545px;top:60px;overflow:visible;" width="26" height="24" viewBox="0 0 26 24"><circle cx="8.5" cy="10.5" r="6.8" fill="#ececec" stroke="#d2d2d2" stroke-width="1"/><path d="M11 12 H20 L17 22 H13 Z" fill="#c2d8ec" opacity="0.85"/><circle cx="17.8" cy="7" r="7.4" fill="#b8ecff" opacity="0.6"/><circle cx="17.8" cy="7" r="5.7" fill="#1788b4"/><path d="M21.1,8.6 A3.7,3.7 0 0 1 15.200000000000001,9.6" fill="none" stroke="#fff" stroke-width="1.1"/><path d="M14.9,9.9 L15.5,5.7 L16.7,6.9 L19.1,4.1 L20.7,5.7 L17.900000000000002,8.1 L19.1,9.3 Z" fill="#fff"/></svg>
<svg class="abs ic" style="left:584px;top:60px;overflow:visible;" width="26" height="24" viewBox="0 0 26 24"><rect x="2" y="4" width="10" height="9" fill="#ebebeb" stroke="#dcdcdc" stroke-width="0.8"/><path d="M5 9 L17.5 19.5 M20.5 8 L12.8 19" stroke="#a3a3a3" stroke-width="1.4"/><ellipse cx="13" cy="20.3" rx="2" ry="2.7" fill="none" stroke="#9a9a9a" stroke-width="1.3" transform="rotate(25 13 20.3)"/><ellipse cx="19" cy="18.4" rx="2" ry="2.7" fill="none" stroke="#9a9a9a" stroke-width="1.3" transform="rotate(-50 19 18.4)"/><circle cx="18.5" cy="7.2" r="7.4" fill="#b8ecff" opacity="0.6"/><circle cx="18.5" cy="7.2" r="5.7" fill="#1788b4"/><path d="M21.8,8.8 A3.7,3.7 0 0 1 15.9,9.8" fill="none" stroke="#fff" stroke-width="1.1"/><path d="M15.6,10.1 L16.2,5.9 L17.4,7.1000000000000005 L19.8,4.300000000000001 L21.4,5.9 L18.6,8.3 L19.8,9.5 Z" fill="#fff"/></svg>
<svg class="abs ic" style="left:614px;top:60px;overflow:visible;" width="26" height="24" viewBox="0 0 26 24"><path d="M3 15 L11 20 M5 11 L13 16 M7 7 L13 11" stroke="#dad6d0" stroke-width="1.3"/><path d="M15 16.5 L22 23 M22 16.5 L15 23" stroke="#eda0a6" stroke-width="1.9"/><circle cx="18.3" cy="7" r="7.4" fill="#b8ecff" opacity="0.6"/><circle cx="18.3" cy="7" r="5.7" fill="#1788b4"/><path d="M21.6,8.6 A3.7,3.7 0 0 1 15.700000000000001,9.6" fill="none" stroke="#fff" stroke-width="1.1"/><path d="M15.4,9.9 L16.0,5.7 L17.2,6.9 L19.6,4.1 L21.2,5.7 L18.400000000000002,8.1 L19.6,9.3 Z" fill="#fff"/></svg>
<svg class="abs ic" style="left:644px;top:60px;overflow:visible;" width="26" height="24" viewBox="0 0 26 24"><path d="M3.5 4 H9.5 V8 L8.4 15 H4.6 L3.5 8 Z" fill="#dedede"/><path d="M3.5 6 H9.5 M3.8 9 H9.2" stroke="#f1f1f1" stroke-width="0.8"/><rect x="16" y="13" width="5" height="8" fill="#d7d7d7"/><path d="M6 20.6 H14" stroke="#d8d8d8" stroke-width="0.9"/><circle cx="12.5" cy="19.6" r="0.9" fill="#ead9a0"/><circle cx="18" cy="7" r="7.4" fill="#b8ecff" opacity="0.6"/><circle cx="18" cy="7" r="5.7" fill="#1788b4"/><path d="M21.3,8.6 A3.7,3.7 0 0 1 15.4,9.6" fill="none" stroke="#fff" stroke-width="1.1"/><path d="M15.1,9.9 L15.7,5.7 L16.9,6.9 L19.3,4.1 L20.9,5.7 L18.1,8.1 L19.3,9.3 Z" fill="#fff"/></svg>
<svg class="abs ic" style="left:674px;top:60px;overflow:visible;" width="26" height="24" viewBox="0 0 26 24"><path d="M6 2.5 L9.8 6.2 L6 10 L2.2 6.2 Z" fill="#f2f2f2" stroke="#c4c4c4" stroke-width="1.3"/><path d="M18.6 15.8 L22.4 19.5 L18.6 23.2 L14.8 19.5 Z" fill="#f2f2f2" stroke="#c4c4c4" stroke-width="1.3"/><path d="M9 9 L15.6 16" stroke="#bcd0e2" stroke-width="1.3"/><circle cx="18.2" cy="7" r="7.4" fill="#b8ecff" opacity="0.6"/><circle cx="18.2" cy="7" r="5.7" fill="#1788b4"/><path d="M21.5,8.6 A3.7,3.7 0 0 1 15.6,9.6" fill="none" stroke="#fff" stroke-width="1.1"/><path d="M15.299999999999999,9.9 L15.899999999999999,5.7 L17.099999999999998,6.9 L19.5,4.1 L21.099999999999998,5.7 L18.3,8.1 L19.5,9.3 Z" fill="#fff"/></svg>
<svg class="abs ic" style="left:713px;top:60.5px;overflow:visible;" width="24" height="24" viewBox="0 0 24 24"><path d="M9 3.4 L1.6 11.6 L9 19.8 M14.4 4.6 L7.6 11.6 L14.4 19" fill="none" stroke="#8fbbe0" stroke-width="1.3"/><path d="M11.6 14 H22 V23 H11.6 Z" fill="#c9def0"/><path d="M11.6 21.2 H22 V23.2 H11.6 Z" fill="#1f4f86"/><path d="M11.6 14 L14.6 16.6 H22" fill="none" stroke="#8fb2d2" stroke-width="0.8"/><rect x="11.4" y="1.2" width="6" height="2.6" rx="1.2" fill="#f2f2f2" stroke="#666" stroke-width="0.9"/><rect x="12.4" y="3.8" width="4" height="9.6" rx="1.6" fill="#e6e6e6" stroke="#666" stroke-width="1"/><path d="M12.8 7 H16 M12.8 10 H16" stroke="#777" stroke-width="0.8"/></svg>
<svg class="abs ic" style="left:743.5px;top:60.8px;overflow:visible;" width="20.5" height="23.5" viewBox="0 0 20.5 23.5"><rect x="1" y="1" width="18.4" height="21.5" fill="#edf4fa" stroke="#676767" stroke-width="1.6"/><text x="10.2" y="10.6" font-size="8.8" font-weight="bold" fill="#3d8fc3" text-anchor="middle" font-family="Liberation Mono">G1</text><text x="10.2" y="19.2" font-size="8.8" font-weight="bold" fill="#3d8fc3" text-anchor="middle" font-family="Liberation Mono">G2</text></svg>
<svg class="abs ic" style="left:775px;top:61.6px;overflow:visible;" width="18.5" height="22" viewBox="0 0 18.5 22"><rect x="1" y="1" width="16.4" height="20" fill="#fafafa" stroke="#595959" stroke-width="1.6"/><rect x="4.4" y="4" width="9.6" height="3.4" fill="#fff" stroke="#595959" stroke-width="1"/><path d="M4.2 10.8 H14.2 M4.2 14.2 H14.2 M4.2 17.6 H14.2" stroke="#595959" stroke-width="1.1"/></svg>
<svg class="abs ic" style="left:809.5px;top:60px;overflow:visible;" width="24" height="24" viewBox="0 0 24 24"><rect x="1.2" y="1.4" width="7.6" height="5" fill="#dcdcdc" stroke="#b5b5b5" stroke-width="0.7"/><path d="M5 6.4 V16" stroke="#7a5a5a" stroke-width="1"/><circle cx="5" cy="16.8" r="1.5" fill="#d8323a"/><rect x="8.6" y="4" width="8" height="9" fill="#c8c8c8"/><rect x="9.6" y="13" width="6" height="7" fill="#e8aa4c"/><path d="M9.6 16 H15.6" stroke="#d89a3a" stroke-width="0.8"/><path d="M15.6 7 H23.2 V11 L21.6 13 H17.2 L15.6 11 Z" fill="#bdbdbd"/><path d="M17.4 13 H21.4 V22.6 H17.4 Z" fill="#a8a8a8"/><path d="M17.4 17.4 L21.4 14 M17.4 21.6 L21.4 18.2" stroke="#6d6d6d" stroke-width="1.1"/></svg>
<svg class="abs ic" style="left:839.5px;top:63.6px;overflow:visible;" width="24" height="18" viewBox="0 0 24 18"><path d="M1 13.5 V6 Q1 1 6 1 H18 Q23 1 23 6 V13.5 Z" fill="#c7d2dc" stroke="#9aa7b4" stroke-width="0.8"/><rect x="1" y="13.2" width="22" height="2.4" fill="#1f4f86"/><rect x="2" y="15.6" width="20" height="1" fill="#8fa6bd"/><rect x="6.5" y="3.4" width="10.4" height="8.4" fill="#5b93c4"/><rect x="9" y="5.6" width="5.6" height="4" fill="#c9def0"/><rect x="18.4" y="4.4" width="3.2" height="6.6" fill="#aebccb"/><rect x="19.2" y="5.6" width="1.4" height="1.4" fill="#5a6a7a"/></svg>
<svg class="abs ic" style="left:871.5px;top:60.4px;overflow:visible;" width="21" height="23.5" viewBox="0 0 21 23.5"><path d="M1 1 H9.4 L13 4.6 V16.4 H1 Z" fill="#f4f4f4" stroke="#5a5a5a" stroke-width="1"/><path d="M3.6 3.4 H12 L15.6 7 V19 H3.6 Z" fill="#f4f4f4" stroke="#5a5a5a" stroke-width="1"/><path d="M6.4 6 H14.6 L19 10.4 V22 H6.4 Z" fill="#f7f9fb" stroke="#4f4f4f" stroke-width="1.2"/><path d="M14.6 6 V10.4 H19 Z" fill="#4f4f4f"/><text x="12.6" y="19.4" font-size="7.4" font-weight="bold" fill="#3d8fc3" text-anchor="middle" font-family="Liberation Sans">G</text></svg>
<svg class="abs ic" style="left:901px;top:60.4px;overflow:visible;" width="21" height="23.5" viewBox="0 0 21 23.5"><path d="M1 1 H9.4 L13 4.6 V16.4 H1 Z" fill="#f4f4f4" stroke="#5a5a5a" stroke-width="1"/><path d="M3.6 3.4 H12 L15.6 7 V19 H3.6 Z" fill="#f4f4f4" stroke="#5a5a5a" stroke-width="1"/><path d="M6.4 6 H14.6 L19 10.4 V22 H6.4 Z" fill="#f7f9fb" stroke="#4f4f4f" stroke-width="1.2"/><path d="M14.6 6 V10.4 H19 Z" fill="#4f4f4f"/><path d="M9 13.4 L14.4 18.2 M11.4 11.8 L16.8 16.4 M9 13.4 Q9.4 11.6 11.4 11.8 M14.4 18.2 Q16.6 18.6 16.8 16.4" fill="none" stroke="#5b9bd0" stroke-width="1.1"/></svg>
<svg class="abs ic" style="left:948.5px;top:65.5px;overflow:visible;" width="23" height="14" viewBox="0 0 23 14"><rect x="1.2" y="7.6" width="20.4" height="5" fill="#ebb724"/><rect x="1.2" y="11.6" width="20.4" height="1.2" fill="#d79e10"/><path d="M4 7.8 V10 M7 7.8 V9.4 M10 7.8 V10 M13 7.8 V9.4 M16 7.8 V10 M19 7.8 V9.4" stroke="#c08c10" stroke-width="0.7"/><path d="M2 1.4 V7.4 M21 1.4 V7.4 M2 4.6 H21" stroke="#4a4a4a" stroke-width="1.1"/><path d="M2.4 4.6 L5 3.2 V6 Z M20.6 4.6 L18 3.2 V6 Z" fill="#4a4a4a"/></svg>
<svg class="abs ic" style="left:1002.3px;top:59.6px;overflow:visible;" width="26.6" height="26" viewBox="0 0 26.6 26"><rect x="0" y="0" width="26.6" height="26" fill="#1b90d4"/><rect x="2.4" y="2.6" width="21.4" height="16" fill="none" stroke="#6fc0ee" stroke-width="1" stroke-dasharray="2 1.4"/><path d="M16 12.6 L16 23.4 L18.6 21 L20.4 24.8 L22 24 L20.2 20.4 L23.6 20.2 Z" fill="#fff"/></svg>
<svg class="abs ic" style="left:7.3px;top:5.3px;overflow:visible;" width="10" height="10.6" viewBox="0 0 10 10.6"><rect x="0" y="0" width="9.8" height="10.4" rx="1.6" fill="#e8661c"/><rect x="0" y="7" width="9.8" height="3.4" rx="1.2" fill="#b9470f"/><path d="M3.6 7.4 V2.6 H6.6 M3.6 4.8 H6" fill="none" stroke="#fff" stroke-width="1.2"/></svg>
<svg class="abs ic" style="left:8.2px;top:27px;overflow:visible;" width="10" height="10" viewBox="0 0 10 10"><rect x="0.0" y="0.0" width="2.6" height="2.5" fill="#3b3b3b"/><rect x="0.0" y="3.4" width="2.6" height="2.5" fill="#3b3b3b"/><rect x="0.0" y="6.8" width="2.6" height="2.5" fill="#3b3b3b"/><rect x="3.5" y="0.0" width="2.6" height="2.5" fill="#3b3b3b"/><rect x="3.5" y="3.4" width="2.6" height="2.5" fill="#3b3b3b"/><rect x="3.5" y="6.8" width="2.6" height="2.5" fill="#3b3b3b"/><rect x="7.0" y="0.0" width="2.6" height="2.5" fill="#3b3b3b"/><rect x="7.0" y="3.4" width="2.6" height="2.5" fill="#3b3b3b"/><rect x="7.0" y="6.8" width="2.6" height="2.5" fill="#3b3b3b"/></svg>
<svg class="abs ic" style="left:31.6px;top:25.9px;overflow:visible;" width="9" height="11.2" viewBox="0 0 9 11.2"><path d="M0 0 H5.6 L9 3.4 V11 H0 Z" fill="#4d4d4d"/><path d="M5.4 0 V3.6 H9" fill="none" stroke="#b9b9b9" stroke-width="0.8"/></svg>
<svg class="abs ic" style="left:44.2px;top:29.6px;overflow:visible;" width="6" height="4" viewBox="0 0 6 4"><path d="M0.3 0.3 H5.3 L2.8 3.6 Z" fill="#3f3f3f"/></svg>
<svg class="abs ic" style="left:62.7px;top:27px;overflow:visible;" width="9.6" height="9.6" viewBox="0 0 9.6 9.6"><rect x="0.4" y="0.4" width="8.8" height="8.8" fill="#8a8a8a" stroke="#7a7a7a" stroke-width="0.8"/><rect x="2" y="1" width="5.4" height="3" fill="#c9c9c9"/><rect x="2.4" y="5.6" width="4.8" height="3.4" fill="#c9c9c9"/><path d="M4.8 0.6 V9" stroke="#8a8a8a" stroke-width="0.7"/></svg>
<svg class="abs ic" style="left:86px;top:28.6px;overflow:visible;" width="10" height="8" viewBox="0 0 10 8"><path d="M1 3.4 H5.6 Q8.6 3.6 8.6 7.2" fill="none" stroke="#8a8a8a" stroke-width="1.5"/><path d="M0.2 3.4 L3.8 0.4 V6.4 Z" fill="#8a8a8a"/></svg>
<svg class="abs ic" style="left:99.4px;top:29.6px;overflow:visible;" width="5" height="4" viewBox="0 0 5 4"><path d="M0.3 0.3 H4.5 L2.4 3.4 Z" fill="#8a8a8a"/></svg>
<svg class="abs ic" style="left:112.2px;top:28.6px;overflow:visible;" width="10" height="8" viewBox="0 0 10 8"><path d="M9 3.4 H4.4 Q1.4 3.6 1.4 7.2" fill="none" stroke="#8a8a8a" stroke-width="1.5"/><path d="M9.8 3.4 L6.2 0.4 V6.4 Z" fill="#8a8a8a"/></svg>
<svg class="abs ic" style="left:126.4px;top:29.6px;overflow:visible;" width="5" height="4" viewBox="0 0 5 4"><path d="M0.3 0.3 H4.5 L2.4 3.4 Z" fill="#8a8a8a"/></svg>
<svg class="abs ic" style="left:145.6px;top:28.9px;overflow:visible;" width="10.4" height="9.4" viewBox="0 0 10.4 9.4"><path d="M5.2 0.4 L10.2 4.8 H8.8 V9 H6.2 V6.2 H4.2 V9 H1.6 V4.8 H0.2 Z" fill="#6c6c6c"/><rect x="7.4" y="1" width="1.3" height="2.4" fill="#6c6c6c"/></svg>
<svg class="abs ic" style="left:592px;top:28px;overflow:visible;" width="10.6" height="11.4" viewBox="0 0 10.6 11.4"><path d="M5.3 0.4 L10.2 2.8 L5.3 5.4 L0.4 2.8 Z" fill="#f5a04a"/><path d="M0.4 2.8 L5.3 5.4 V11 L0.4 8.4 Z" fill="#ee8424"/><path d="M10.2 2.8 L5.3 5.4 V11 L10.2 8.4 Z" fill="#d96a10"/></svg>
<svg class="abs ic" style="left:1120.6px;top:30px;overflow:visible;" width="7" height="7" viewBox="0 0 7 7"><path d="M0.8 0.8 L6.2 6.2 M6.2 0.8 L0.8 6.2" stroke="#3a3a3a" stroke-width="1.1"/></svg>
<svg class="abs ic" style="left:1139.5px;top:28px;overflow:visible;" width="9.4" height="9.4" viewBox="0 0 9.4 9.4"><path d="M4.7 0.4 V9 M0.4 4.7 H9" stroke="#7a7a7a" stroke-width="1.5"/></svg>
<svg class="abs ic" style="left:1162px;top:25.6px;overflow:visible;" width="13" height="13" viewBox="0 0 13 13"><circle cx="6.5" cy="6.5" r="4.6" fill="none" stroke="#fff" stroke-width="1.7"/><path d="M4.6 8.4 L7.8 5.2 M6.6 4 L9 6.4" stroke="#fff" stroke-width="1.7" stroke-linecap="round"/><circle cx="5.4" cy="7.6" r="1.6" fill="#fff"/></svg>
<svg class="abs ic" style="left:1185px;top:26px;overflow:visible;" width="12.4" height="12.4" viewBox="0 0 12.4 12.4"><circle cx="6.2" cy="6.2" r="5.9" fill="#b2b2b2"/><circle cx="6.2" cy="6.2" r="4.7" fill="#5a5a5a"/><path d="M6.2 3.4 V6.6 H8.6" fill="none" stroke="#d8d8d8" stroke-width="1"/></svg>
<svg class="abs ic" style="left:1208.6px;top:26px;overflow:visible;" width="10" height="12.4" viewBox="0 0 10 12.4"><path d="M5 0.6 Q5.8 0.6 5.8 1.6 Q8.4 2.4 8.4 5.8 Q8.4 8 9.6 9.4 H0.4 Q1.6 8 1.6 5.8 Q1.6 2.4 4.2 1.6 Q4.2 0.6 5 0.6 Z" fill="#4d4d4d"/><path d="M3.6 10.4 H6.4 Q5 12.4 3.6 10.4 Z" fill="#4d4d4d"/></svg>
<svg class="abs ic" style="left:1230.6px;top:26px;overflow:visible;" width="12.4" height="12.4" viewBox="0 0 12.4 12.4"><circle cx="6.2" cy="6.2" r="5.8" fill="#4d4d4d"/><text x="6.2" y="9.4" font-size="9" font-weight="bold" fill="#e6e6e6" text-anchor="middle" font-family="Liberation Sans">?</text></svg>
<svg class="abs ic" style="left:1257px;top:24px;overflow:visible;" width="16.4" height="16.4" viewBox="0 0 16.4 16.4"><defs><clipPath id="avc"><circle cx="8.2" cy="8.2" r="8"/></clipPath></defs><circle cx="8.2" cy="8.2" r="8" fill="#aab6cc"/><g clip-path="url(#avc)"><circle cx="8.2" cy="5.8" r="3.3" fill="#4a5878"/><path d="M1.6 16.4 Q2 9.6 8.2 9.6 Q14.4 9.6 14.8 16.4 Z" fill="#4a5878"/></g></svg>
<svg class="abs ic" style="left:1198.5px;top:9.8px;overflow:visible;" width="8" height="2" viewBox="0 0 8 2"><path d="M0 1 H7.6" stroke="#555" stroke-width="1"/></svg>
<svg class="abs ic" style="left:1229.8px;top:6.4px;overflow:visible;" width="8" height="8" viewBox="0 0 8 8"><rect x="0.6" y="0.6" width="6.6" height="6.6" fill="none" stroke="#6a6a6a" stroke-width="1"/></svg>
<svg class="abs ic" style="left:1262.6px;top:6.6px;overflow:visible;" width="8" height="8" viewBox="0 0 8 8"><path d="M0.6 0.6 L7 7 M7 0.6 L0.6 7" stroke="#6a6a6a" stroke-width="1"/></svg>
<div class="abs" style="left:495px;top:735.5px;width:296px;height:15.5px;background:#f1f1f1;border-radius:1px"></div>
<svg class="abs ic" style="left:511.50000000000006px;top:741.2px;overflow:visible;" width="4.6" height="3.2" viewBox="0 0 4.6 3.2"><path d="M0.2 0.2 H4.2 L2.2 2.9 Z" fill="#1e1e1e"/></svg>
<svg class="abs ic" style="left:589.0px;top:741.2px;overflow:visible;" width="4.6" height="3.2" viewBox="0 0 4.6 3.2"><path d="M0.2 0.2 H4.2 L2.2 2.9 Z" fill="#1e1e1e"/></svg>
<svg class="abs ic" style="left:610.0px;top:741.2px;overflow:visible;" width="4.6" height="3.2" viewBox="0 0 4.6 3.2"><path d="M0.2 0.2 H4.2 L2.2 2.9 Z" fill="#1e1e1e"/></svg>
<svg class="abs ic" style="left:631.4px;top:741.2px;overflow:visible;" width="4.6" height="3.2" viewBox="0 0 4.6 3.2"><path d="M0.2 0.2 H4.2 L2.2 2.9 Z" fill="#1e1e1e"/></svg>
<svg class="abs ic" style="left:652.8px;top:741.2px;overflow:visible;" width="4.6" height="3.2" viewBox="0 0 4.6 3.2"><path d="M0.2 0.2 H4.2 L2.2 2.9 Z" fill="#1e1e1e"/></svg>
<svg class="abs ic" style="left:674.5px;top:741.2px;overflow:visible;" width="4.6" height="3.2" viewBox="0 0 4.6 3.2"><path d="M0.2 0.2 H4.2 L2.2 2.9 Z" fill="#1e1e1e"/></svg>
<svg class="abs ic" style="left:696.0px;top:741.2px;overflow:visible;" width="4.6" height="3.2" viewBox="0 0 4.6 3.2"><path d="M0.2 0.2 H4.2 L2.2 2.9 Z" fill="#1e1e1e"/></svg>
<svg class="abs ic" style="left:717.5px;top:741.2px;overflow:visible;" width="4.6" height="3.2" viewBox="0 0 4.6 3.2"><path d="M0.2 0.2 H4.2 L2.2 2.9 Z" fill="#1e1e1e"/></svg>
<svg class="abs ic" style="left:739.0999999999999px;top:741.2px;overflow:visible;" width="4.6" height="3.2" viewBox="0 0 4.6 3.2"><path d="M0.2 0.2 H4.2 L2.2 2.9 Z" fill="#1e1e1e"/></svg>
<svg class="abs ic" style="left:760.8px;top:741.2px;overflow:visible;" width="4.6" height="3.2" viewBox="0 0 4.6 3.2"><path d="M0.2 0.2 H4.2 L2.2 2.9 Z" fill="#1e1e1e"/></svg>
<svg class="abs ic" style="left:782.5999999999999px;top:741.2px;overflow:visible;" width="4.6" height="3.2" viewBox="0 0 4.6 3.2"><path d="M0.2 0.2 H4.2 L2.2 2.9 Z" fill="#1e1e1e"/></svg>
<svg class="abs ic" style="left:497px;top:737px;overflow:visible;" width="12" height="12" viewBox="0 0 12 12"><ellipse cx="6" cy="6.4" rx="5.2" ry="2" fill="none" stroke="#6a6a6a" stroke-width="1"/><ellipse cx="6" cy="6" rx="1.8" ry="5" fill="none" stroke="#6a6a6a" stroke-width="1"/><circle cx="6" cy="6.2" r="1.3" fill="#8a8a8a"/></svg>
<svg class="abs ic" style="left:520.2px;top:737.6px;overflow:visible;" width="11" height="10" viewBox="0 0 11 10"><rect x="0.4" y="3.4" width="10" height="4.4" fill="#8a8a8a"/><rect x="2" y="1" width="6.8" height="3" fill="#a6a6a6"/><rect x="0.4" y="8.6" width="10" height="1" fill="#9a9a9a"/><path d="M1.4 5.4 H9.4" stroke="#c8c8c8" stroke-width="0.8"/></svg>
<svg class="abs ic" style="left:538.6px;top:737px;overflow:visible;" width="11" height="11.6" viewBox="0 0 11 11.6"><path d="M2.6 6 V2.4 Q3.2 1.6 3.8 2.4 V1.4 Q4.6 0.6 5.2 1.4 V1.2 Q6 0.6 6.6 1.4 V2 Q7.4 1.4 8 2.2 V6.6 Q8 10.6 5.6 10.8 Q3.6 10.8 2.4 8.6 L0.8 6 Q1.4 5 2.6 6 Z" fill="#f4f4f4" stroke="#6a6a6a" stroke-width="0.9"/></svg>
<svg class="abs ic" style="left:556px;top:736.6px;overflow:visible;" width="12" height="12" viewBox="0 0 12 12"><circle cx="4.6" cy="4.6" r="3.7" fill="#f6f6f6" stroke="#8a8a8a" stroke-width="1"/><path d="M7.4 7.4 L10.8 10.8" stroke="#2e2e2e" stroke-width="1.7"/><path d="M8.6 0.6 L10.2 2.2 M10.2 0.6 L8.6 2.2" stroke="#8a8a8a" stroke-width="0.7"/></svg>
<svg class="abs ic" style="left:573.6px;top:737px;overflow:visible;" width="12" height="12" viewBox="0 0 12 12"><circle cx="4.8" cy="4.6" r="3.9" fill="#f6f6f6" stroke="#9a9a9a" stroke-width="1"/><path d="M7.6 7.6 L11 11" stroke="#2e2e2e" stroke-width="1.7"/></svg>
<svg class="abs ic" style="left:597.2px;top:736.6px;overflow:visible;" width="12" height="12" viewBox="0 0 12 12"><rect x="0.4" y="0.6" width="11" height="7.6" fill="#8a9ccc"/><rect x="1.4" y="1.6" width="9" height="5.4" fill="#a9b7dc"/><rect x="3" y="8.6" width="6" height="1.6" fill="#9a9a9a"/></svg>
<svg class="abs ic" style="left:618.6px;top:737.4px;overflow:visible;" width="11" height="10.4" viewBox="0 0 11 10.4"><defs><linearGradient id="gsq" x1="0" y1="0" x2="0" y2="1"><stop offset="0" stop-color="#b5b5b5"/><stop offset="1" stop-color="#8d8d8d"/></linearGradient></defs><rect x="0.3" y="0.3" width="10" height="9.6" fill="url(#gsq)"/></svg>
<svg class="abs ic" style="left:640.4px;top:737px;overflow:visible;" width="11" height="11.4" viewBox="0 0 11 11.4"><rect x="0.5" y="2.6" width="7.6" height="8" fill="#9aa6ba"/><path d="M0.5 2.6 L3 0.5 H10.4 V8 L8.1 10.6 V2.6 Z" fill="#c6cedb" stroke="#8e9ab0" stroke-width="0.5"/><rect x="2" y="5.6" width="3.4" height="2.6" fill="#eef1f5"/></svg>
<svg class="abs ic" style="left:661.6px;top:738px;overflow:visible;" width="12" height="9.6" viewBox="0 0 12 9.6"><path d="M2.2 0.6 H11 V6.6 L9.6 8.8 H0.8 V2.6 Z" fill="#7f94c4"/><path d="M0.8 2.6 H9.6 L11 0.6 M9.6 2.6 V8.8" fill="none" stroke="#5f76aa" stroke-width="0.7"/></svg>
<svg class="abs ic" style="left:683.2px;top:736.8px;overflow:visible;" width="12" height="12" viewBox="0 0 12 12"><circle cx="6" cy="6" r="4.5" fill="none" stroke="#3a3a3a" stroke-width="1.3" stroke-dasharray="11 3.1"/></svg>
<svg class="abs ic" style="left:704.8px;top:737.4px;overflow:visible;" width="12.4" height="10.6" viewBox="0 0 12.4 10.6"><path d="M6.2 0.4 L12 5.2 L6.2 10.2 L0.4 5.2 Z" fill="#4c9ada"/><path d="M6.2 2 L10 5.2 L6.2 8.4 L2.4 5.2 Z" fill="#6fb2e6"/></svg>
<svg class="abs ic" style="left:726.6px;top:738px;overflow:visible;" width="12" height="9.6" viewBox="0 0 12 9.6"><rect x="0.4" y="0.4" width="11" height="7.2" fill="#5a8ac4"/><rect x="1.6" y="1.6" width="8.6" height="4.4" fill="#c4d8ee"/><rect x="0.4" y="7.6" width="11" height="1.4" fill="#2e5a96"/><path d="M5 1.8 V5.8 M7 1.8 V5.8" stroke="#5a8ac4" stroke-width="0.8"/></svg>
<svg class="abs ic" style="left:749.6px;top:737.4px;overflow:visible;" width="8.6" height="11" viewBox="0 0 8.6 11"><path d="M0.4 0.6 H8 L5.4 4.6 V10.4 H3.2 V4.6 Z" fill="#8f8f8f"/><path d="M0.4 0.6 H8 L7 2 H1.4 Z" fill="#c2c2c2"/></svg>
<svg class="abs ic" style="left:770px;top:738px;overflow:visible;" width="11.6" height="9.6" viewBox="0 0 11.6 9.6"><path d="M0.6 2.4 H6 Q10.8 2.4 10.8 4.8 Q10.8 7.4 6 7.4 H0.6 V5.8 H6 Q8 5.8 8 4.8 Q8 4 6 4 H0.6 Z" fill="#2f8fdc"/><path d="M2.6 0.6 V9 M5 0.6 V9" stroke="#6ab4ee" stroke-width="0.9"/></svg>
<svg class="abs" style="left:0;top:100px;filter:blur(0.4px)" width="1280" height="120" viewBox="0 100 1280 120"><defs><filter id="vsh" x="-30%" y="-30%" width="160%" height="160%"><feGaussianBlur stdDeviation="3"/></filter></defs><polygon points="1226.0,166.0 1262.0,150.0 1266.0,162.0 1242.0,180.0" fill="#9a9a9a" opacity="0.45" filter="url(#vsh)"/><polygon points="1238.3,121.7 1262.7,133.0 1238.3,145.0 1215.6,133.0" fill="#eaeaea" stroke="#7c7c7c" stroke-width="0.8" stroke-linejoin="round"/><polygon points="1215.6,133.0 1238.3,145.0 1238.3,174.1 1216.2,159.2" fill="#e4e4e4" stroke="#7c7c7c" stroke-width="0.8" stroke-linejoin="round"/><polygon points="1238.3,145.0 1262.7,133.0 1261.5,161.0 1238.3,174.1" fill="#dcdcdc" stroke="#7c7c7c" stroke-width="0.8" stroke-linejoin="round"/><text x="0" y="0" font-size="5" fill="#9a9a9a" font-family="Liberation Sans" text-anchor="middle" transform="matrix(0.86,0.42,-0.86,0.42,1239.4,134.6)">TOP</text><text x="0" y="0" font-size="5.6" fill="#9a9a9a" font-family="Liberation Sans" text-anchor="middle" transform="matrix(0.9,0.5,0,1,1227,156)">FRONT</text><text x="0" y="0" font-size="5.6" fill="#9a9a9a" font-family="Liberation Sans" text-anchor="middle" transform="matrix(0.9,-0.48,0,1,1250.4,156.6)">RIGHT</text><path d="M1216.2,159.2 L1213.2,128" stroke="#2a2a9a" stroke-width="1.3"/><path d="M1216.2,159.2 L1242.4,177" stroke="#e0a0a0" stroke-width="1.1"/><text x="1208.8" y="126.4" font-size="9" font-weight="bold" fill="#7676c2" font-family="Liberation Sans">Z</text><text x="1242.6" y="185.2" font-size="8.6" fill="#ea8e8e" font-family="Liberation Sans">X</text></svg>
<svg class="abs ic" style="left:246.2px;top:463px;overflow:visible;" width="11" height="14" viewBox="0 0 11 14"><path d="M1 1 V12 L3.6 9.6 L5.4 13.2 L7 12.4 L5.2 9 L9 8.8 Z" fill="#fff" stroke="#222" stroke-width="0.9" stroke-linejoin="round"/></svg>
<div class="abs" style="left:4px;top:105px;width:209.5px;height:16.5px;background:#ededed;border:1px solid #dedede;border-radius:1px;box-shadow:0 1px 1px rgba(0,0,0,0.06)"></div>
<div class="t " style="left:22px;top:109.2px;font-size:7.55px;color:#444">BROWSER</div>
<svg class="abs" style="left:8px;top:110px" width="9" height="6" viewBox="0 0 9 6"><path d="M4 0.4 V5.6 L0.5 3 Z M8 0.4 V5.6 L4.5 3 Z" fill="#2a2a2a"/></svg>
<div class="abs" style="left:199px;top:110px;width:6px;height:6px;border-radius:3px;background:#1e1e1e"></div><div class="abs" style="left:200.3px;top:112.6px;width:3.4px;height:0.9px;background:#ddd"></div>
<div class="row" style="left:29px;top:125.89999999999999px;width:133px;height:14.4px;background:#efefef"></div>
<svg class="abs ic" style="left:17px;top:130.6px;overflow:visible;" width="6" height="6" viewBox="0 0 6 6"><path d="M5.5 0.5 L5.5 5.5 L0.5 5.5 Z" fill="#3a3a3a"/></svg>
<svg class="abs ic" style="left:31px;top:129.1px;overflow:visible;" width="12" height="8" viewBox="0 0 12 8"><ellipse cx="6" cy="4" rx="5.2" ry="3.1" fill="none" stroke="#8e8e8e" stroke-width="1.2"/><circle cx="6" cy="4" r="1.8" fill="#8e8e8e"/></svg>
<svg class="abs ic" style="left:50px;top:127.1px;overflow:visible;" width="11" height="12" viewBox="0 0 11 12"><rect x="1.5" y="0.8" width="4.6" height="9.5" fill="#dcdcdc" stroke="#9a9a9a" stroke-width="0.9"/><path d="M6.1 5.5 H9.6 V10.3 H1 V11.2 H10.3" fill="none" stroke="#9a9a9a" stroke-width="0.9"/></svg>
<div class="t tr" style="left:70px;top:129.0px;">standard sight stand v47</div>
<div class="row" style="left:42px;top:142.615px;width:57px;height:14.4px;background:#efefef"></div>
<svg class="abs ic" style="left:43.5px;top:143.815px;overflow:visible;" width="11" height="12" viewBox="0 0 11 12"><path d="M2 0.8 H7 L9 2.8 V9 H2 Z" fill="#e9e9e9" stroke="#a8a8a8" stroke-width="0.8"/><rect x="0.8" y="8.2" width="9.6" height="2.6" fill="#e8c84a" stroke="#c9a62e" stroke-width="0.5"/></svg>
<div class="t tr" style="left:65px;top:145.715px;">Units: in</div>
<div class="row" style="left:42px;top:159.33px;width:76px;height:14.4px;background:#efefef"></div>
<svg class="abs ic" style="left:29px;top:162.53px;overflow:visible;" width="7" height="8" viewBox="0 0 7 8"><path d="M1 0.8 L5.6 4 L1 7.2 Z" fill="none" stroke="#9a9a9a" stroke-width="0.9"/></svg>
<svg class="abs ic" style="left:43px;top:161.53px;overflow:visible;" width="12" height="10" viewBox="0 0 12 10"><path d="M0.5 1 H4.5 L5.5 2.3 H11.5 V9.5 H0.5 Z" fill="#8d8d8d"/><path d="M0.5 3.2 H11.5" stroke="#b5b5b5" stroke-width="0.6"/></svg>
<div class="t tr" style="left:65px;top:162.43px;">Named Views</div>
<div class="row" style="left:42px;top:176.04500000000002px;width:68px;height:14.4px;background:#efefef"></div>
<svg class="abs ic" style="left:29px;top:179.245px;overflow:visible;" width="7" height="8" viewBox="0 0 7 8"><path d="M1 0.8 L5.6 4 L1 7.2 Z" fill="none" stroke="#9a9a9a" stroke-width="0.9"/></svg>
<svg class="abs ic" style="left:43.5px;top:179.245px;overflow:visible;" width="12" height="8" viewBox="0 0 12 8"><ellipse cx="6" cy="4" rx="5.2" ry="3.1" fill="none" stroke="#c6c6c6" stroke-width="1.1"/><circle cx="6" cy="4" r="2" fill="none" stroke="#c6c6c6" stroke-width="0.9"/></svg>
<svg class="abs ic" style="left:61px;top:178.245px;overflow:visible;" width="12" height="10" viewBox="0 0 12 10"><path d="M0.5 1 H4.5 L5.5 2.3 H11.5 V9.5 H0.5 Z" fill="#8d8d8d"/><path d="M0.5 3.2 H11.5" stroke="#b5b5b5" stroke-width="0.6"/></svg>
<div class="t tr" style="left:82.5px;top:179.145px;">Origin</div>
<div class="row" style="left:42px;top:192.76px;width:71px;height:14.4px;background:#efefef"></div>
<svg class="abs ic" style="left:29px;top:195.95999999999998px;overflow:visible;" width="7" height="8" viewBox="0 0 7 8"><path d="M1 0.8 L5.6 4 L1 7.2 Z" fill="none" stroke="#9a9a9a" stroke-width="0.9"/></svg>
<svg class="abs ic" style="left:43.5px;top:195.95999999999998px;overflow:visible;" width="12" height="8" viewBox="0 0 12 8"><ellipse cx="6" cy="4" rx="5.2" ry="3.1" fill="none" stroke="#8e8e8e" stroke-width="1.2"/><circle cx="6" cy="4" r="1.8" fill="#8e8e8e"/></svg>
<svg class="abs ic" style="left:62px;top:193.95999999999998px;overflow:visible;" width="11" height="12" viewBox="0 0 11 12"><rect x="1.5" y="0.8" width="4.6" height="9.5" fill="#dcdcdc" stroke="#9a9a9a" stroke-width="0.9"/><path d="M6.1 5.5 H9.6 V10.3 H1 V11.2 H10.3" fill="none" stroke="#9a9a9a" stroke-width="0.9"/></svg>
<div class="t tr" style="left:82.5px;top:195.85999999999999px;">Models</div>
<div class="row" style="left:42px;top:209.47500000000002px;width:76px;height:14.4px;background:#efefef"></div>
<svg class="abs ic" style="left:29px;top:214.175px;overflow:visible;" width="6" height="6" viewBox="0 0 6 6"><path d="M5.5 0.5 L5.5 5.5 L0.5 5.5 Z" fill="#3a3a3a"/></svg>
<svg class="abs ic" style="left:44px;top:210.675px;overflow:visible;" width="10" height="12" viewBox="0 0 10 12"><rect x="0.8" y="0.8" width="8.4" height="10.4" fill="#f3f3f3" stroke="#ababab" stroke-width="0.9"/><text x="5" y="5.4" font-size="4.5" font-weight="bold" fill="#4a90c8" text-anchor="middle" font-family="Liberation Sans">G</text><path d="M2.2 7.2 H8 M2.2 9.2 H8" stroke="#9a9a9a" stroke-width="0.8"/></svg>
<div class="t tr" style="left:65px;top:212.57500000000002px;">NC Programs</div>
<div class="row" style="left:55px;top:226.19px;width:69px;height:14.4px;background:#efefef"></div>
<svg class="abs ic" style="left:56px;top:227.89px;overflow:visible;" width="12" height="11" viewBox="0 0 12 11"><path d="M6 0.6 L11.5 10.4 L0.5 10.4 Z" fill="#f5a623" stroke="#f5a623" stroke-width="0.8" stroke-linejoin="round"/><rect x="5.4" y="3.6" width="1.3" height="3.8" fill="#fff"/><rect x="5.4" y="8.1" width="1.3" height="1.3" fill="#fff"/></svg>
<svg class="abs ic" style="left:75px;top:227.39px;overflow:visible;" width="10" height="12" viewBox="0 0 10 12"><rect x="0.8" y="0.8" width="8.4" height="10.4" fill="#f3f3f3" stroke="#ababab" stroke-width="0.9"/><text x="5" y="5.4" font-size="4.5" font-weight="bold" fill="#4a90c8" text-anchor="middle" font-family="Liberation Sans">G</text><path d="M2.2 7.2 H8 M2.2 9.2 H8" stroke="#9a9a9a" stroke-width="0.8"/></svg>
<div class="t tr" style="left:95.5px;top:229.29px;">10001</div>
<div class="row" style="left:55px;top:242.905px;width:69px;height:14.4px;background:#efefef"></div>
<svg class="abs ic" style="left:56px;top:244.605px;overflow:visible;" width="12" height="11" viewBox="0 0 12 11"><path d="M6 0.6 L11.5 10.4 L0.5 10.4 Z" fill="#f5a623" stroke="#f5a623" stroke-width="0.8" stroke-linejoin="round"/><rect x="5.4" y="3.6" width="1.3" height="3.8" fill="#fff"/><rect x="5.4" y="8.1" width="1.3" height="1.3" fill="#fff"/></svg>
<svg class="abs ic" style="left:75px;top:244.105px;overflow:visible;" width="10" height="12" viewBox="0 0 10 12"><rect x="0.8" y="0.8" width="8.4" height="10.4" fill="#f3f3f3" stroke="#ababab" stroke-width="0.9"/><text x="5" y="5.4" font-size="4.5" font-weight="bold" fill="#4a90c8" text-anchor="middle" font-family="Liberation Sans">G</text><path d="M2.2 7.2 H8 M2.2 9.2 H8" stroke="#9a9a9a" stroke-width="0.8"/></svg>
<div class="t tr" style="left:95.5px;top:246.005px;">10002</div>
<div class="row" style="left:55px;top:259.62px;width:69px;height:14.4px;background:#efefef"></div>
<svg class="abs ic" style="left:56px;top:261.32px;overflow:visible;" width="12" height="11" viewBox="0 0 12 11"><path d="M6 0.6 L11.5 10.4 L0.5 10.4 Z" fill="#f5a623" stroke="#f5a623" stroke-width="0.8" stroke-linejoin="round"/><rect x="5.4" y="3.6" width="1.3" height="3.8" fill="#fff"/><rect x="5.4" y="8.1" width="1.3" height="1.3" fill="#fff"/></svg>
<svg class="abs ic" style="left:75px;top:260.82px;overflow:visible;" width="10" height="12" viewBox="0 0 10 12"><rect x="0.8" y="0.8" width="8.4" height="10.4" fill="#f3f3f3" stroke="#ababab" stroke-width="0.9"/><text x="5" y="5.4" font-size="4.5" font-weight="bold" fill="#4a90c8" text-anchor="middle" font-family="Liberation Sans">G</text><path d="M2.2 7.2 H8 M2.2 9.2 H8" stroke="#9a9a9a" stroke-width="0.8"/></svg>
<div class="t tr" style="left:95.5px;top:262.71999999999997px;">10004</div>
<div class="row" style="left:55px;top:276.335px;width:69px;height:14.4px;background:#efefef"></div>
<svg class="abs ic" style="left:56px;top:278.03499999999997px;overflow:visible;" width="12" height="11" viewBox="0 0 12 11"><path d="M6 0.6 L11.5 10.4 L0.5 10.4 Z" fill="#f5a623" stroke="#f5a623" stroke-width="0.8" stroke-linejoin="round"/><rect x="5.4" y="3.6" width="1.3" height="3.8" fill="#fff"/><rect x="5.4" y="8.1" width="1.3" height="1.3" fill="#fff"/></svg>
<svg class="abs ic" style="left:75px;top:277.53499999999997px;overflow:visible;" width="10" height="12" viewBox="0 0 10 12"><rect x="0.8" y="0.8" width="8.4" height="10.4" fill="#f3f3f3" stroke="#ababab" stroke-width="0.9"/><text x="5" y="5.4" font-size="4.5" font-weight="bold" fill="#4a90c8" text-anchor="middle" font-family="Liberation Sans">G</text><path d="M2.2 7.2 H8 M2.2 9.2 H8" stroke="#9a9a9a" stroke-width="0.8"/></svg>
<div class="t tr" style="left:95.5px;top:279.43499999999995px;">10003</div>
<div class="row" style="left:42px;top:293.05px;width:69px;height:14.4px;background:#efefef"></div>
<svg class="abs ic" style="left:29px;top:297.75px;overflow:visible;" width="6" height="6" viewBox="0 0 6 6"><path d="M5.5 0.5 L5.5 5.5 L0.5 5.5 Z" fill="#3a3a3a"/></svg>
<svg class="abs ic" style="left:43.5px;top:296.25px;overflow:visible;" width="12" height="8" viewBox="0 0 12 8"><ellipse cx="6" cy="4" rx="5.2" ry="3.1" fill="none" stroke="#8e8e8e" stroke-width="1.2"/><circle cx="6" cy="4" r="1.8" fill="#8e8e8e"/></svg>
<svg class="abs ic" style="left:60px;top:294.75px;overflow:visible;" width="13" height="11" viewBox="0 0 13 11"><path d="M0.8 1 H4.4 L5.3 2.2 H10.2 V6 M0.8 1 V9.2 H6.5" fill="none" stroke="#6f6f6f" stroke-width="1"/><path d="M9.5 6 L12 7.6 L9.5 10.6 L7 7.6 Z" fill="#4a90c8" stroke="#2f6fa5" stroke-width="0.6"/></svg>
<div class="t tr" style="left:80px;top:296.15px;">Setups</div>
<div class="abs" style="left:60px;top:304.45px;width:48px;height:0;border-top:1.4px dashed #5b6f9b"></div>
<div class="row" style="left:55px;top:309.76500000000004px;width:103px;height:14.4px;background:#efefef"></div>
<svg class="abs ic" style="left:42px;top:314.46500000000003px;overflow:visible;" width="6" height="6" viewBox="0 0 6 6"><path d="M5.5 0.5 L5.5 5.5 L0.5 5.5 Z" fill="#3a3a3a"/></svg>
<svg class="abs ic" style="left:56px;top:312.96500000000003px;overflow:visible;" width="12" height="8" viewBox="0 0 12 8"><ellipse cx="6" cy="4" rx="5.2" ry="3.1" fill="none" stroke="#8e8e8e" stroke-width="1.2"/><circle cx="6" cy="4" r="1.8" fill="#8e8e8e"/></svg>
<svg class="abs ic" style="left:74.5px;top:311.46500000000003px;overflow:visible;" width="11" height="11" viewBox="0 0 11 11"><circle cx="5.5" cy="5.5" r="4.6" fill="#fbfdf0" stroke="#b9cf7a" stroke-width="1.1"/><path d="M3.3 5.6 L4.9 7.3 L7.7 3.7" fill="none" stroke="#8cab3c" stroke-width="1.1"/></svg>
<svg class="abs ic" style="left:90px;top:311.46500000000003px;overflow:visible;" width="13" height="11" viewBox="0 0 13 11"><path d="M0.8 1 H4.4 L5.3 2.2 H10.2 V6 M0.8 1 V9.2 H6.5" fill="none" stroke="#6f6f6f" stroke-width="1"/><path d="M9.5 6 L12 7.6 L9.5 10.6 L7 7.6 Z" fill="#4a90c8" stroke="#2f6fa5" stroke-width="0.6"/></svg>
<div class="t tr" style="left:110px;top:312.865px;">Setup1</div>
<svg class="abs ic" style="left:144px;top:311.96500000000003px;overflow:visible;" width="10" height="10" viewBox="0 0 10 10"><defs><radialGradient id="bg" cx="0.4" cy="0.35" r="0.7"><stop offset="0" stop-color="#f4f4f4"/><stop offset="1" stop-color="#b5b5b5"/></radialGradient></defs><circle cx="5" cy="5" r="4.4" fill="url(#bg)" stroke="#c2c2c2" stroke-width="0.5"/></svg>
<div class="row" style="left:67px;top:326.47999999999996px;width:122px;height:14.4px;background:#efefef"></div>
<svg class="abs ic" style="left:54.5px;top:329.67999999999995px;overflow:visible;" width="7" height="8" viewBox="0 0 7 8"><path d="M1 0.8 L5.6 4 L1 7.2 Z" fill="none" stroke="#9a9a9a" stroke-width="0.9"/></svg>
<svg class="abs ic" style="left:69px;top:329.67999999999995px;overflow:visible;" width="12" height="8" viewBox="0 0 12 8"><ellipse cx="6" cy="4" rx="5.2" ry="3.1" fill="none" stroke="#c6c6c6" stroke-width="1.1"/><circle cx="6" cy="4" r="2" fill="none" stroke="#c6c6c6" stroke-width="0.9"/></svg>
<svg class="abs ic" style="left:86.5px;top:328.17999999999995px;overflow:visible;" width="11" height="11" viewBox="0 0 11 11"><circle cx="5.5" cy="5.5" r="4.6" fill="#fbfdf0" stroke="#b9cf7a" stroke-width="1.1"/><path d="M3.3 5.6 L4.9 7.3 L7.7 3.7" fill="none" stroke="#8cab3c" stroke-width="1.1"/></svg>
<svg class="abs ic" style="left:104px;top:328.67999999999995px;overflow:visible;" width="12" height="10" viewBox="0 0 12 10"><path d="M6.5 0.5 L11.5 3.6 L5 9.5 L0.5 6 Z" fill="#3f8fd0" stroke="#2b6ea8" stroke-width="0.5"/><path d="M2.3 4.7 L8.2 1.6 M3.6 6 L9.6 2.7 M1.5 7 L6.5 9" stroke="#bcdcf3" stroke-width="0.8"/></svg>
<div class="t tr" style="left:125px;top:329.5799999999999px;">[T6] face left side</div>
<div class="row" style="left:55px;top:343.195px;width:103px;height:14.4px;background:#efefef"></div>
<svg class="abs ic" style="left:42px;top:347.895px;overflow:visible;" width="6" height="6" viewBox="0 0 6 6"><path d="M5.5 0.5 L5.5 5.5 L0.5 5.5 Z" fill="#3a3a3a"/></svg>
<svg class="abs ic" style="left:56px;top:346.395px;overflow:visible;" width="12" height="8" viewBox="0 0 12 8"><ellipse cx="6" cy="4" rx="5.2" ry="3.1" fill="none" stroke="#8e8e8e" stroke-width="1.2"/><circle cx="6" cy="4" r="1.8" fill="#8e8e8e"/></svg>
<svg class="abs ic" style="left:74.5px;top:344.895px;overflow:visible;" width="11" height="11" viewBox="0 0 11 11"><circle cx="5.5" cy="5.5" r="4.6" fill="#fbfdf0" stroke="#b9cf7a" stroke-width="1.1"/><path d="M3.3 5.6 L4.9 7.3 L7.7 3.7" fill="none" stroke="#8cab3c" stroke-width="1.1"/></svg>
<svg class="abs ic" style="left:90px;top:344.895px;overflow:visible;" width="13" height="11" viewBox="0 0 13 11"><path d="M0.8 1 H4.4 L5.3 2.2 H10.2 V6 M0.8 1 V9.2 H6.5" fill="none" stroke="#6f6f6f" stroke-width="1"/><path d="M9.5 6 L12 7.6 L9.5 10.6 L7 7.6 Z" fill="#4a90c8" stroke="#2f6fa5" stroke-width="0.6"/></svg>
<div class="t tr" style="left:110px;top:346.29499999999996px;">Setup2</div>
<svg class="abs ic" style="left:144px;top:345.395px;overflow:visible;" width="10" height="10" viewBox="0 0 10 10"><defs><radialGradient id="bg" cx="0.4" cy="0.35" r="0.7"><stop offset="0" stop-color="#f4f4f4"/><stop offset="1" stop-color="#b5b5b5"/></radialGradient></defs><circle cx="5" cy="5" r="4.4" fill="url(#bg)" stroke="#c2c2c2" stroke-width="0.5"/></svg>
<div class="row" style="left:67px;top:359.91px;width:119px;height:14.4px;background:#efefef"></div>
<svg class="abs ic" style="left:54.5px;top:363.11px;overflow:visible;" width="7" height="8" viewBox="0 0 7 8"><path d="M1 0.8 L5.6 4 L1 7.2 Z" fill="none" stroke="#9a9a9a" stroke-width="0.9"/></svg>
<svg class="abs ic" style="left:69px;top:363.11px;overflow:visible;" width="12" height="8" viewBox="0 0 12 8"><ellipse cx="6" cy="4" rx="5.2" ry="3.1" fill="none" stroke="#c6c6c6" stroke-width="1.1"/><circle cx="6" cy="4" r="2" fill="none" stroke="#c6c6c6" stroke-width="0.9"/></svg>
<svg class="abs ic" style="left:86.5px;top:361.61px;overflow:visible;" width="11" height="11" viewBox="0 0 11 11"><circle cx="5.5" cy="5.5" r="4.6" fill="#fbfdf0" stroke="#b9cf7a" stroke-width="1.1"/><path d="M3.3 5.6 L4.9 7.3 L7.7 3.7" fill="none" stroke="#8cab3c" stroke-width="1.1"/></svg>
<svg class="abs ic" style="left:104px;top:362.11px;overflow:visible;" width="12" height="10" viewBox="0 0 12 10"><path d="M6.5 0.5 L11.5 3.6 L5 9.5 L0.5 6 Z" fill="#3f8fd0" stroke="#2b6ea8" stroke-width="0.5"/><path d="M2.3 4.7 L8.2 1.6 M3.6 6 L9.6 2.7 M1.5 7 L6.5 9" stroke="#bcdcf3" stroke-width="0.8"/></svg>
<div class="t tr" style="left:125px;top:363.01px;">[T6] face bottom</div>
<div class="row" style="left:55px;top:376.625px;width:103px;height:14.4px;background:#efefef"></div>
<svg class="abs ic" style="left:42px;top:381.325px;overflow:visible;" width="6" height="6" viewBox="0 0 6 6"><path d="M5.5 0.5 L5.5 5.5 L0.5 5.5 Z" fill="#3a3a3a"/></svg>
<svg class="abs ic" style="left:56px;top:379.825px;overflow:visible;" width="12" height="8" viewBox="0 0 12 8"><ellipse cx="6" cy="4" rx="5.2" ry="3.1" fill="none" stroke="#8e8e8e" stroke-width="1.2"/><circle cx="6" cy="4" r="1.8" fill="#8e8e8e"/></svg>
<svg class="abs ic" style="left:74.5px;top:378.325px;overflow:visible;" width="11" height="11" viewBox="0 0 11 11"><circle cx="5.5" cy="5.5" r="4.6" fill="#fbfdf0" stroke="#b9cf7a" stroke-width="1.1"/><path d="M3.3 5.6 L4.9 7.3 L7.7 3.7" fill="none" stroke="#8cab3c" stroke-width="1.1"/></svg>
<svg class="abs ic" style="left:90px;top:378.325px;overflow:visible;" width="13" height="11" viewBox="0 0 13 11"><path d="M0.8 1 H4.4 L5.3 2.2 H10.2 V6 M0.8 1 V9.2 H6.5" fill="none" stroke="#6f6f6f" stroke-width="1"/><path d="M9.5 6 L12 7.6 L9.5 10.6 L7 7.6 Z" fill="#4a90c8" stroke="#2f6fa5" stroke-width="0.6"/></svg>
<div class="t tr" style="left:110px;top:379.72499999999997px;">Setup3</div>
<svg class="abs ic" style="left:144px;top:378.825px;overflow:visible;" width="10" height="10" viewBox="0 0 10 10"><defs><radialGradient id="bg" cx="0.4" cy="0.35" r="0.7"><stop offset="0" stop-color="#f4f4f4"/><stop offset="1" stop-color="#b5b5b5"/></radialGradient></defs><circle cx="5" cy="5" r="4.4" fill="url(#bg)" stroke="#c2c2c2" stroke-width="0.5"/></svg>
<div class="row" style="left:67px;top:393.34px;width:126px;height:14.4px;background:#efefef"></div>
<svg class="abs ic" style="left:54.5px;top:396.53999999999996px;overflow:visible;" width="7" height="8" viewBox="0 0 7 8"><path d="M1 0.8 L5.6 4 L1 7.2 Z" fill="none" stroke="#9a9a9a" stroke-width="0.9"/></svg>
<svg class="abs ic" style="left:69px;top:396.53999999999996px;overflow:visible;" width="12" height="8" viewBox="0 0 12 8"><ellipse cx="6" cy="4" rx="5.2" ry="3.1" fill="none" stroke="#c6c6c6" stroke-width="1.1"/><circle cx="6" cy="4" r="2" fill="none" stroke="#c6c6c6" stroke-width="0.9"/></svg>
<svg class="abs ic" style="left:86.5px;top:395.03999999999996px;overflow:visible;" width="11" height="11" viewBox="0 0 11 11"><circle cx="5.5" cy="5.5" r="4.6" fill="#fbfdf0" stroke="#b9cf7a" stroke-width="1.1"/><path d="M3.3 5.6 L4.9 7.3 L7.7 3.7" fill="none" stroke="#8cab3c" stroke-width="1.1"/></svg>
<svg class="abs ic" style="left:104px;top:395.53999999999996px;overflow:visible;" width="12" height="10" viewBox="0 0 12 10"><path d="M6.5 0.5 L11.5 3.6 L5 9.5 L0.5 6 Z" fill="#3f8fd0" stroke="#2b6ea8" stroke-width="0.5"/><path d="M2.3 4.7 L8.2 1.6 M3.6 6 L9.6 2.7 M1.5 7 L6.5 9" stroke="#bcdcf3" stroke-width="0.8"/></svg>
<div class="t tr" style="left:125px;top:396.43999999999994px;">[T6] face right side</div>
<div class="row" style="left:55px;top:410.055px;width:103px;height:14.4px;background:#efefef"></div>
<svg class="abs ic" style="left:42px;top:414.755px;overflow:visible;" width="6" height="6" viewBox="0 0 6 6"><path d="M5.5 0.5 L5.5 5.5 L0.5 5.5 Z" fill="#3a3a3a"/></svg>
<svg class="abs ic" style="left:56px;top:413.255px;overflow:visible;" width="12" height="8" viewBox="0 0 12 8"><ellipse cx="6" cy="4" rx="5.2" ry="3.1" fill="none" stroke="#8e8e8e" stroke-width="1.2"/><circle cx="6" cy="4" r="1.8" fill="#8e8e8e"/></svg>
<svg class="abs ic" style="left:74px;top:411.755px;overflow:visible;" width="12" height="11" viewBox="0 0 12 11"><path d="M9.8 1 L9.8 10.4 L1 10.4 Z" fill="#f5a623"/></svg>
<svg class="abs ic" style="left:90px;top:411.755px;overflow:visible;" width="13" height="11" viewBox="0 0 13 11"><path d="M0.8 1 H4.4 L5.3 2.2 H10.2 V6 M0.8 1 V9.2 H6.5" fill="none" stroke="#6f6f6f" stroke-width="1"/><path d="M9.5 6 L12 7.6 L9.5 10.6 L7 7.6 Z" fill="#4a90c8" stroke="#2f6fa5" stroke-width="0.6"/></svg>
<div class="abs" style="left:104px;top:411.455px;width:40px;height:11.5px;background:#8b8b8b"></div>
<div class="t tr" style="left:110px;top:413.155px;color:#fff;font-weight:bold;font-size:7.2px;-webkit-text-stroke:0">Setup4</div>
<svg class="abs ic" style="left:147px;top:412.255px;overflow:visible;" width="10" height="10" viewBox="0 0 10 10"><circle cx="5" cy="5" r="4.2" fill="#f2f2f2" stroke="#9c9c9c" stroke-width="1"/><circle cx="5" cy="5" r="1.8" fill="#2a2a2a"/></svg>
<div class="row" style="left:67px;top:426.77000000000004px;width:108px;height:14.4px;background:#efefef"></div>
<svg class="abs ic" style="left:54.5px;top:429.97px;overflow:visible;" width="7" height="8" viewBox="0 0 7 8"><path d="M1 0.8 L5.6 4 L1 7.2 Z" fill="none" stroke="#9a9a9a" stroke-width="0.9"/></svg>
<svg class="abs ic" style="left:69px;top:429.97px;overflow:visible;" width="12" height="8" viewBox="0 0 12 8"><ellipse cx="6" cy="4" rx="5.2" ry="3.1" fill="none" stroke="#c6c6c6" stroke-width="1.1"/><circle cx="6" cy="4" r="2" fill="none" stroke="#c6c6c6" stroke-width="0.9"/></svg>
<svg class="abs ic" style="left:86.5px;top:428.47px;overflow:visible;" width="11" height="11" viewBox="0 0 11 11"><circle cx="5.5" cy="5.5" r="4.6" fill="#fbfdf0" stroke="#b9cf7a" stroke-width="1.1"/><path d="M3.3 5.6 L4.9 7.3 L7.7 3.7" fill="none" stroke="#8cab3c" stroke-width="1.1"/></svg>
<svg class="abs ic" style="left:104px;top:428.97px;overflow:visible;" width="12" height="10" viewBox="0 0 12 10"><path d="M6.5 0.5 L11.5 3.6 L5 9.5 L0.5 6 Z" fill="#3f8fd0" stroke="#2b6ea8" stroke-width="0.5"/><path d="M2.3 4.7 L8.2 1.6 M3.6 6 L9.6 2.7 M1.5 7 L6.5 9" stroke="#bcdcf3" stroke-width="0.8"/></svg>
<div class="t tr" style="left:125px;top:429.87px;">[T6] face top</div>
<div class="row" style="left:67px;top:443.48499999999996px;width:144px;height:14.4px;background:#efefef"></div>
<svg class="abs ic" style="left:54.5px;top:446.68499999999995px;overflow:visible;" width="7" height="8" viewBox="0 0 7 8"><path d="M1 0.8 L5.6 4 L1 7.2 Z" fill="none" stroke="#9a9a9a" stroke-width="0.9"/></svg>
<svg class="abs ic" style="left:69px;top:446.68499999999995px;overflow:visible;" width="12" height="8" viewBox="0 0 12 8"><ellipse cx="6" cy="4" rx="5.2" ry="3.1" fill="none" stroke="#c6c6c6" stroke-width="1.1"/><circle cx="6" cy="4" r="2" fill="none" stroke="#c6c6c6" stroke-width="0.9"/></svg>
<svg class="abs ic" style="left:86.5px;top:445.18499999999995px;overflow:visible;" width="11" height="11" viewBox="0 0 11 11"><circle cx="5.5" cy="5.5" r="4.6" fill="#fbfdf0" stroke="#b9cf7a" stroke-width="1.1"/><path d="M3.3 5.6 L4.9 7.3 L7.7 3.7" fill="none" stroke="#8cab3c" stroke-width="1.1"/></svg>
<svg class="abs ic" style="left:104px;top:445.68499999999995px;overflow:visible;" width="12" height="10" viewBox="0 0 12 10"><path d="M6 0.5 L11.5 4 L6 9.5 L0.5 4 Z" fill="#e8f1f9" stroke="#8fc0e6" stroke-width="0.7"/><path d="M6 9.3 L10 5.3 L6 6.8 L2 5.3 Z" fill="#3f8fd0"/></svg>
<div class="t tr" style="left:125px;top:446.5849999999999px;">[T6] contour nose and...</div>
<div class="row" style="left:67px;top:460.2px;width:144px;height:14.4px;background:#efefef"></div>
<svg class="abs ic" style="left:54.5px;top:463.4px;overflow:visible;" width="7" height="8" viewBox="0 0 7 8"><path d="M1 0.8 L5.6 4 L1 7.2 Z" fill="none" stroke="#9a9a9a" stroke-width="0.9"/></svg>
<svg class="abs ic" style="left:69px;top:463.4px;overflow:visible;" width="12" height="8" viewBox="0 0 12 8"><ellipse cx="6" cy="4" rx="5.2" ry="3.1" fill="none" stroke="#c6c6c6" stroke-width="1.1"/><circle cx="6" cy="4" r="2" fill="none" stroke="#c6c6c6" stroke-width="0.9"/></svg>
<svg class="abs ic" style="left:86px;top:461.9px;overflow:visible;" width="12" height="11" viewBox="0 0 12 11"><path d="M6 0.6 L11.5 10.4 L0.5 10.4 Z" fill="#f5a623" stroke="#f5a623" stroke-width="0.8" stroke-linejoin="round"/><rect x="5.4" y="3.6" width="1.3" height="3.8" fill="#fff"/><rect x="5.4" y="8.1" width="1.3" height="1.3" fill="#fff"/></svg>
<svg class="abs ic" style="left:105px;top:461.9px;overflow:visible;" width="10" height="11" viewBox="0 0 10 11"><rect x="0.8" y="0.8" width="8.4" height="9.4" rx="0.8" fill="#d6e2ee" stroke="#b5c3d2" stroke-width="0.8"/><path d="M3 3.2 H7.6 M3 5.2 H7.6 M3 7.2 H6.4" stroke="#2f78bd" stroke-width="1.3"/></svg>
<div class="t tr" style="left:125px;top:463.29999999999995px;">[T6] plunge main oper...</div>
<div class="row" style="left:67px;top:476.915px;width:132px;height:14.4px;background:#efefef"></div>
<svg class="abs ic" style="left:54.5px;top:480.115px;overflow:visible;" width="7" height="8" viewBox="0 0 7 8"><path d="M1 0.8 L5.6 4 L1 7.2 Z" fill="none" stroke="#9a9a9a" stroke-width="0.9"/></svg>
<svg class="abs ic" style="left:69px;top:480.115px;overflow:visible;" width="12" height="8" viewBox="0 0 12 8"><ellipse cx="6" cy="4" rx="5.2" ry="3.1" fill="none" stroke="#c6c6c6" stroke-width="1.1"/><circle cx="6" cy="4" r="2" fill="none" stroke="#c6c6c6" stroke-width="0.9"/></svg>
<svg class="abs ic" style="left:86px;top:478.615px;overflow:visible;" width="12" height="11" viewBox="0 0 12 11"><path d="M6 0.6 L11.5 10.4 L0.5 10.4 Z" fill="#f5a623" stroke="#f5a623" stroke-width="0.8" stroke-linejoin="round"/><rect x="5.4" y="3.6" width="1.3" height="3.8" fill="#fff"/><rect x="5.4" y="8.1" width="1.3" height="1.3" fill="#fff"/></svg>
<svg class="abs ic" style="left:105px;top:478.615px;overflow:visible;" width="10" height="11" viewBox="0 0 10 11"><rect x="0.8" y="0.8" width="8.4" height="9.4" rx="0.8" fill="#d6e2ee" stroke="#b5c3d2" stroke-width="0.8"/><path d="M3 3.2 H7.6 M3 5.2 H7.6 M3 7.2 H6.4" stroke="#2f78bd" stroke-width="1.3"/></svg>
<div class="t tr" style="left:125px;top:480.015px;">[T6] ejector opening</div>
<div class="row" style="left:55px;top:493.63000000000005px;width:103px;height:14.4px;background:#efefef"></div>
<svg class="abs ic" style="left:42px;top:498.33000000000004px;overflow:visible;" width="6" height="6" viewBox="0 0 6 6"><path d="M5.5 0.5 L5.5 5.5 L0.5 5.5 Z" fill="#3a3a3a"/></svg>
<svg class="abs ic" style="left:56px;top:496.83000000000004px;overflow:visible;" width="12" height="8" viewBox="0 0 12 8"><ellipse cx="6" cy="4" rx="5.2" ry="3.1" fill="none" stroke="#8e8e8e" stroke-width="1.2"/><circle cx="6" cy="4" r="1.8" fill="#8e8e8e"/></svg>
<svg class="abs ic" style="left:74.5px;top:495.33000000000004px;overflow:visible;" width="11" height="11" viewBox="0 0 11 11"><circle cx="5.5" cy="5.5" r="4.6" fill="#fbfdf0" stroke="#b9cf7a" stroke-width="1.1"/><path d="M3.3 5.6 L4.9 7.3 L7.7 3.7" fill="none" stroke="#8cab3c" stroke-width="1.1"/></svg>
<svg class="abs ic" style="left:90px;top:495.33000000000004px;overflow:visible;" width="13" height="11" viewBox="0 0 13 11"><path d="M0.8 1 H4.4 L5.3 2.2 H10.2 V6 M0.8 1 V9.2 H6.5" fill="none" stroke="#6f6f6f" stroke-width="1"/><path d="M9.5 6 L12 7.6 L9.5 10.6 L7 7.6 Z" fill="#4a90c8" stroke="#2f6fa5" stroke-width="0.6"/></svg>
<div class="t tr" style="left:110px;top:496.73px;">Setup5</div>
<svg class="abs ic" style="left:144px;top:495.83000000000004px;overflow:visible;" width="10" height="10" viewBox="0 0 10 10"><defs><radialGradient id="bg" cx="0.4" cy="0.35" r="0.7"><stop offset="0" stop-color="#f4f4f4"/><stop offset="1" stop-color="#b5b5b5"/></radialGradient></defs><circle cx="5" cy="5" r="4.4" fill="url(#bg)" stroke="#c2c2c2" stroke-width="0.5"/></svg>
<div class="abs" style="left:90px;top:505.03000000000003px;width:48px;height:0;border-top:1.4px dashed #5b6f9b"></div>
<div class="row" style="left:67px;top:510.34499999999997px;width:35px;height:14.4px;background:#efefef"></div>
<div class="abs" style="left:102px;top:510.54499999999996px;width:82.5px;height:14px;background:#1f8fd6"></div>
<svg class="abs ic" style="left:54.5px;top:513.545px;overflow:visible;" width="7" height="8" viewBox="0 0 7 8"><path d="M1 0.8 L5.6 4 L1 7.2 Z" fill="none" stroke="#9a9a9a" stroke-width="0.9"/></svg>
<svg class="abs ic" style="left:69px;top:513.545px;overflow:visible;" width="12" height="8" viewBox="0 0 12 8"><ellipse cx="6" cy="4" rx="5.2" ry="3.1" fill="none" stroke="#c6c6c6" stroke-width="1.1"/><circle cx="6" cy="4" r="2" fill="none" stroke="#c6c6c6" stroke-width="0.9"/></svg>
<svg class="abs ic" style="left:86.5px;top:512.045px;overflow:visible;" width="11" height="11" viewBox="0 0 11 11"><circle cx="5.5" cy="5.5" r="4.6" fill="#fbfdf0" stroke="#b9cf7a" stroke-width="1.1"/><path d="M3.3 5.6 L4.9 7.3 L7.7 3.7" fill="none" stroke="#8cab3c" stroke-width="1.1"/></svg>
<svg class="abs ic" style="left:105px;top:512.045px;overflow:visible;" width="10" height="11" viewBox="0 0 10 11"><rect x="0.8" y="0.8" width="8.4" height="9" rx="1" fill="#8fc7ee" stroke="#e6f2fb" stroke-width="1"/><path d="M3 3.3 H7.4 M3 5.2 H7.4 M3 7 H6" stroke="#fff" stroke-width="1"/></svg>
<div class="t tr" style="left:125px;top:513.4449999999999px;color:#fff;font-weight:bold;font-size:7.35px;-webkit-text-stroke:0">[T3] Adaptive3</div>
<div class="row" style="left:67px;top:527.06px;width:114px;height:14.4px;background:#efefef"></div>
<svg class="abs ic" style="left:54.5px;top:530.26px;overflow:visible;" width="7" height="8" viewBox="0 0 7 8"><path d="M1 0.8 L5.6 4 L1 7.2 Z" fill="none" stroke="#9a9a9a" stroke-width="0.9"/></svg>
<svg class="abs ic" style="left:69px;top:530.26px;overflow:visible;" width="12" height="8" viewBox="0 0 12 8"><ellipse cx="6" cy="4" rx="5.2" ry="3.1" fill="none" stroke="#c6c6c6" stroke-width="1.1"/><circle cx="6" cy="4" r="2" fill="none" stroke="#c6c6c6" stroke-width="0.9"/></svg>
<svg class="abs ic" style="left:86.5px;top:528.76px;overflow:visible;" width="11" height="11" viewBox="0 0 11 11"><circle cx="5.5" cy="5.5" r="4.6" fill="#fbfdf0" stroke="#b9cf7a" stroke-width="1.1"/><path d="M3.3 5.6 L4.9 7.3 L7.7 3.7" fill="none" stroke="#8cab3c" stroke-width="1.1"/></svg>
<svg class="abs ic" style="left:105px;top:528.76px;overflow:visible;" width="10" height="11" viewBox="0 0 10 11"><rect x="0.8" y="0.8" width="8.4" height="9.4" rx="0.8" fill="#d6e2ee" stroke="#b5c3d2" stroke-width="0.8"/><path d="M3 3.2 H7.6 M3 5.2 H7.6 M3 7.2 H6.4" stroke="#2f78bd" stroke-width="1.3"/></svg>
<div class="t tr" style="left:125px;top:530.16px;">[T2] Adaptive4</div>
<div class="row" style="left:67px;top:543.775px;width:100px;height:14.4px;background:#efefef"></div>
<svg class="abs ic" style="left:54.5px;top:546.975px;overflow:visible;" width="7" height="8" viewBox="0 0 7 8"><path d="M1 0.8 L5.6 4 L1 7.2 Z" fill="none" stroke="#9a9a9a" stroke-width="0.9"/></svg>
<svg class="abs ic" style="left:69px;top:546.975px;overflow:visible;" width="12" height="8" viewBox="0 0 12 8"><ellipse cx="6" cy="4" rx="5.2" ry="3.1" fill="none" stroke="#c6c6c6" stroke-width="1.1"/><circle cx="6" cy="4" r="2" fill="none" stroke="#c6c6c6" stroke-width="0.9"/></svg>
<svg class="abs ic" style="left:86.5px;top:545.475px;overflow:visible;" width="11" height="11" viewBox="0 0 11 11"><circle cx="5.5" cy="5.5" r="4.6" fill="#fbfdf0" stroke="#b9cf7a" stroke-width="1.1"/><path d="M3.3 5.6 L4.9 7.3 L7.7 3.7" fill="none" stroke="#8cab3c" stroke-width="1.1"/></svg>
<svg class="abs ic" style="left:105.5px;top:545.475px;overflow:visible;" width="9" height="11" viewBox="0 0 9 11"><rect x="1" y="1" width="7" height="9" rx="2" fill="#e3e3e3" stroke="#bdbdbd" stroke-width="0.8"/><path d="M1.5 3.6 H7.5 M1.5 5.6 H7.5 M1.5 7.6 H7.5" stroke="#c9c9c9" stroke-width="0.7"/></svg>
<div class="t tr" style="left:125px;top:546.875px;">[T2] Bore1</div>
<div class="row" style="left:67px;top:560.4899999999999px;width:137px;height:14.4px;background:#efefef"></div>
<svg class="abs ic" style="left:54.5px;top:563.6899999999999px;overflow:visible;" width="7" height="8" viewBox="0 0 7 8"><path d="M1 0.8 L5.6 4 L1 7.2 Z" fill="none" stroke="#9a9a9a" stroke-width="0.9"/></svg>
<svg class="abs ic" style="left:69px;top:563.6899999999999px;overflow:visible;" width="12" height="8" viewBox="0 0 12 8"><ellipse cx="6" cy="4" rx="5.2" ry="3.1" fill="none" stroke="#c6c6c6" stroke-width="1.1"/><circle cx="6" cy="4" r="2" fill="none" stroke="#c6c6c6" stroke-width="0.9"/></svg>
<svg class="abs ic" style="left:86.5px;top:562.1899999999999px;overflow:visible;" width="11" height="11" viewBox="0 0 11 11"><circle cx="5.5" cy="5.5" r="4.6" fill="#fbfdf0" stroke="#b9cf7a" stroke-width="1.1"/><path d="M3.3 5.6 L4.9 7.3 L7.7 3.7" fill="none" stroke="#8cab3c" stroke-width="1.1"/></svg>
<svg class="abs ic" style="left:105.5px;top:562.1899999999999px;overflow:visible;" width="9" height="11" viewBox="0 0 9 11"><path d="M1 2.4 V8.6 A3.5 1.6 0 0 0 8 8.6 V2.4 Z" fill="#3f8fd0"/><ellipse cx="4.5" cy="2.4" rx="3.5" ry="1.6" fill="#7db8e6" stroke="#2b6ea8" stroke-width="0.5"/><path d="M1 4.6 A3.5 1.6 0 0 0 8 4.6 M1 6.6 A3.5 1.6 0 0 0 8 6.6" fill="none" stroke="#a9d2f0" stroke-width="0.7"/></svg>
<div class="t tr" style="left:125px;top:563.5899999999999px;">[T8] coarse threading</div>
<div class="row" style="left:67px;top:577.2049999999999px;width:128px;height:14.4px;background:#efefef"></div>
<svg class="abs ic" style="left:54.5px;top:580.405px;overflow:visible;" width="7" height="8" viewBox="0 0 7 8"><path d="M1 0.8 L5.6 4 L1 7.2 Z" fill="none" stroke="#9a9a9a" stroke-width="0.9"/></svg>
<svg class="abs ic" style="left:69px;top:580.405px;overflow:visible;" width="12" height="8" viewBox="0 0 12 8"><ellipse cx="6" cy="4" rx="5.2" ry="3.1" fill="none" stroke="#c6c6c6" stroke-width="1.1"/><circle cx="6" cy="4" r="2" fill="none" stroke="#c6c6c6" stroke-width="0.9"/></svg>
<svg class="abs ic" style="left:86.5px;top:578.905px;overflow:visible;" width="11" height="11" viewBox="0 0 11 11"><circle cx="5.5" cy="5.5" r="4.6" fill="#fbfdf0" stroke="#b9cf7a" stroke-width="1.1"/><path d="M3.3 5.6 L4.9 7.3 L7.7 3.7" fill="none" stroke="#8cab3c" stroke-width="1.1"/></svg>
<svg class="abs ic" style="left:105.5px;top:578.905px;overflow:visible;" width="9" height="11" viewBox="0 0 9 11"><path d="M1 2.4 V8.6 A3.5 1.6 0 0 0 8 8.6 V2.4 Z" fill="#3f8fd0"/><ellipse cx="4.5" cy="2.4" rx="3.5" ry="1.6" fill="#7db8e6" stroke="#2b6ea8" stroke-width="0.5"/><path d="M1 4.6 A3.5 1.6 0 0 0 8 4.6 M1 6.6 A3.5 1.6 0 0 0 8 6.6" fill="none" stroke="#a9d2f0" stroke-width="0.7"/></svg>
<div class="t tr" style="left:125px;top:580.305px;">[T8] final threading</div>
<div class="abs" style="left:4.5px;top:735px;width:209px;height:17px;background:#ededed;border:1px solid #dcdcdc"></div>
<div class="t " style="left:22px;top:740.2px;font-size:7.7px;color:#444">COMMENTS</div>
<div class="abs" style="left:199px;top:741px;width:6px;height:6px;border-radius:3px;background:#2a2a2a"></div><div class="abs" style="left:201px;top:743px;width:2px;height:2px;border-radius:1px;background:#ddd"></div>
<div class="abs" style="left:0;top:752.5px;width:1280px;height:2.5px;background:#e9e9e9"></div>
<div class="t" style="left:1123.4px;top:740.6px;font-size:7.63px;font-weight:bold;color:#1a1a1a">Adaptive3 | Machining time: 0:03:58</div>
<div class="abs" style="left:1263px;top:738.5px;width:11px;height:11px;border-radius:5.5px;background:#111"></div>
<svg class="abs" style="left:1265px;top:741px" width="7" height="6" viewBox="0 0 7 6"><path d="M0.6 3.8 L3 1.6 V2.8 H6 V4.6 H3 V5.6 Z" fill="#e8e8e8" transform="rotate(-20 3.5 3)"/></svg>
</div></body></html>
